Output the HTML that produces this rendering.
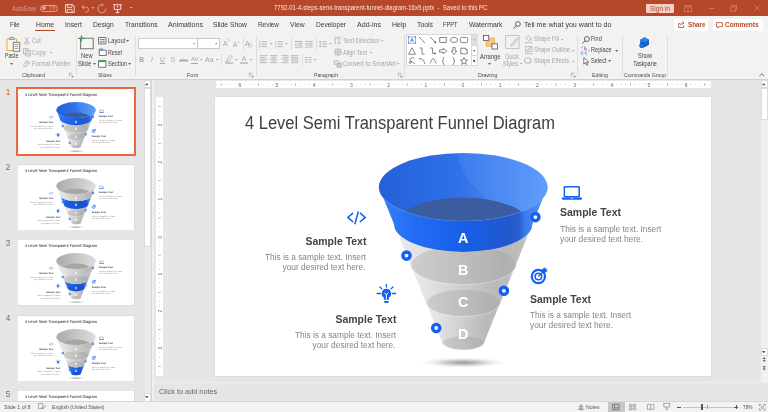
<!DOCTYPE html>
<html><head><meta charset="utf-8"><title>PowerPoint</title><style>
html,body{margin:0;padding:0;}
body{width:768px;height:412px;overflow:hidden;position:relative;background:#e6e6e6;font-family:"Liberation Sans",sans-serif;}
#root{position:absolute;left:0;top:0;width:768px;height:412px;overflow:hidden;will-change:transform;}
.a{position:absolute;box-sizing:border-box;}
.t{position:absolute;white-space:nowrap;font-family:"Liberation Sans",sans-serif;}
.th .t{text-rendering:geometricPrecision;}
svg{position:absolute;overflow:visible;}
</style></head><body>
<div id="root">
<div class="a" style="left:0px;top:0px;width:768px;height:16.3px;background:#b7472a;"></div>
<div class="a" style="left:0px;top:16.3px;width:768px;height:62.7px;background:#f3f2f1;"></div>
<div class="a" style="left:0px;top:79px;width:768px;height:1px;background:#d2d0ce;"></div>
<div class="a" style="left:0px;top:80px;width:768px;height:322px;background:#e6e6e6;"></div>
<div class="t" id="t0" style="top:1.50px;height:13px;line-height:13px;font-size:6.4px;color:rgba(255,255,255,.45);left:11.5px;transform:scaleX(0.8839);transform-origin:0 50%;">AutoSave</div>
<div class="a" style="left:39.5px;top:4.5px;width:18.5px;height:7.5px;border:1px solid rgba(255,255,255,.5);border-radius:4px;"></div>
<div class="a" style="left:42px;top:6.4px;width:3.6px;height:3.6px;border-radius:2px;background:rgba(255,255,255,.5);"></div>
<div class="t" id="t1" style="top:3.20px;height:10px;line-height:10px;font-size:5.2px;color:rgba(255,255,255,.45);left:48.6px;transform:scaleX(0.9519);transform-origin:0 50%;">Off</div>
<svg style="left:65px;top:4px" width="10" height="9" viewBox="0 0 10 9"><path d="M0.6 0.6h7l1.6 1.4v6.4H0.6z" fill="none" stroke="#fff" stroke-width=".9" opacity=".88"/><path d="M2.4 0.8v2.6h4.6V0.8M2.4 8.2V5.4h4.6v2.8" fill="none" stroke="#fff" stroke-width=".8" opacity=".85"/></svg>
<svg style="left:80.5px;top:4px" width="9" height="9" viewBox="0 0 9 9"><path d="M3.2 0.8L0.9 3.2l2.6 2.2M1 3.2h4.2a2.3 2.4 0 0 1 0 4.9H4.2" fill="none" stroke="rgba(255,255,255,.42)" stroke-width="1"/></svg>
<svg style="left:90.5px;top:7px" width="4" height="3" viewBox="0 0 4 3"><path d="M0 0h3.6L1.8 2.2z" fill="rgba(255,255,255,.4)"/></svg>
<svg style="left:97.3px;top:3.1px" width="9.9" height="10.4" viewBox="0 0 9 9.5"><path d="M5.2 1.6A3.6 3.7 0 1 0 8 5" fill="none" stroke="rgba(255,255,255,.42)" stroke-width="1"/><path d="M4.4 0.4l1.6 1.4-1.5 1.5" fill="none" stroke="rgba(255,255,255,.42)" stroke-width=".9"/></svg>
<svg style="left:113px;top:3.6px" width="9" height="9.5" viewBox="0 0 9 9.5"><path d="M0.3 0.7h8.4M1.2 0.8v4.6h6.6V0.8M4.5 5.4v3M2.6 8.6h3.8" fill="none" stroke="#fff" stroke-width=".9" opacity=".9"/><circle cx="4.5" cy="2.6" r=".8" fill="#fff" opacity=".9"/></svg>
<svg style="left:129.6px;top:7.4px" width="3" height="2.4" viewBox="0 0 3 2.4"><path d="M0.2 0h2.2L1.3 1.6z" fill="rgba(255,255,255,.75)"/></svg>
<div class="t" id="t2" style="top:1.10px;height:13px;line-height:13px;font-size:6.4px;color:rgba(255,255,255,.88);left:273.8px;transform:scaleX(0.9358);transform-origin:0 50%;">7792-01-4-steps-semi-transparent-funnel-diagram-16x9.pptx&nbsp; -&nbsp; Saved to this PC</div>
<div class="a" style="left:646px;top:4px;width:27.5px;height:8.6px;background:#f6cfc4;"></div>
<div class="t" id="t3" style="top:1.90px;height:13px;line-height:13px;font-size:6.6px;color:#b7472a;left:509.80px;width:300px;text-align:center;transform:scaleX(0.9915);transform-origin:50% 50%;">Sign in</div>
<svg style="left:684px;top:4.5px" width="8" height="7" viewBox="0 0 8 7"><path d="M0.5 0.5h7v6h-7zM0.5 2h7M4 2v4.5" fill="none" stroke="rgba(255,255,255,.27)" stroke-width=".9"/></svg>
<div class="a" style="left:708.5px;top:8px;width:5.5px;height:1px;background:rgba(255,255,255,.27);"></div>
<svg style="left:730px;top:4.5px" width="7" height="7" viewBox="0 0 7 7"><path d="M0.5 1.8h4.6v4.6H0.5zM1.9 1.8V0.5h4.6v4.6H5.2" fill="none" stroke="rgba(255,255,255,.27)" stroke-width=".9"/></svg>
<svg style="left:753.5px;top:5px" width="6" height="6" viewBox="0 0 6 6"><path d="M0.3 0.3l5.4 5.4M5.7 0.3L0.3 5.7" fill="none" stroke="rgba(255,255,255,.27)" stroke-width=".9"/></svg>
<div class="t" id="t4" style="top:17.10px;height:15px;line-height:15px;font-size:7.3px;color:#3b3a39;left:9.7px;transform:scaleX(0.8159);transform-origin:0 50%;">File</div>
<div class="t" id="t5" style="top:17.10px;height:15px;line-height:15px;font-size:7.3px;color:#3b3a39;left:35.5px;transform:scaleX(0.9297);transform-origin:0 50%;">Home</div>
<div class="t" id="t6" style="top:17.10px;height:15px;line-height:15px;font-size:7.3px;color:#3b3a39;left:64.8px;transform:scaleX(0.9260);transform-origin:0 50%;">Insert</div>
<div class="t" id="t7" style="top:17.10px;height:15px;line-height:15px;font-size:7.3px;color:#3b3a39;left:92.6px;transform:scaleX(0.9155);transform-origin:0 50%;">Design</div>
<div class="t" id="t8" style="top:17.10px;height:15px;line-height:15px;font-size:7.3px;color:#3b3a39;left:124.5px;transform:scaleX(0.9175);transform-origin:0 50%;">Transitions</div>
<div class="t" id="t9" style="top:17.10px;height:15px;line-height:15px;font-size:7.3px;color:#3b3a39;left:167.5px;transform:scaleX(0.9693);transform-origin:0 50%;">Animations</div>
<div class="t" id="t10" style="top:17.10px;height:15px;line-height:15px;font-size:7.3px;color:#3b3a39;left:212.5px;transform:scaleX(0.9311);transform-origin:0 50%;">Slide Show</div>
<div class="t" id="t11" style="top:17.10px;height:15px;line-height:15px;font-size:7.3px;color:#3b3a39;left:257.5px;transform:scaleX(0.8773);transform-origin:0 50%;">Review</div>
<div class="t" id="t12" style="top:17.10px;height:15px;line-height:15px;font-size:7.3px;color:#3b3a39;left:290px;transform:scaleX(0.9243);transform-origin:0 50%;">View</div>
<div class="t" id="t13" style="top:17.10px;height:15px;line-height:15px;font-size:7.3px;color:#3b3a39;left:316px;transform:scaleX(0.9018);transform-origin:0 50%;">Developer</div>
<div class="t" id="t14" style="top:17.10px;height:15px;line-height:15px;font-size:7.3px;color:#3b3a39;left:357px;transform:scaleX(0.9697);transform-origin:0 50%;">Add-ins</div>
<div class="t" id="t15" style="top:17.10px;height:15px;line-height:15px;font-size:7.3px;color:#3b3a39;left:391.5px;transform:scaleX(0.9657);transform-origin:0 50%;">Help</div>
<div class="t" id="t16" style="top:17.10px;height:15px;line-height:15px;font-size:7.3px;color:#3b3a39;left:416.5px;transform:scaleX(0.9386);transform-origin:0 50%;">Tools</div>
<div class="t" id="t17" style="top:17.10px;height:15px;line-height:15px;font-size:7.3px;color:#3b3a39;left:443px;transform:scaleX(0.7772);transform-origin:0 50%;">FPPT</div>
<div class="t" id="t18" style="top:17.10px;height:15px;line-height:15px;font-size:7.3px;color:#3b3a39;left:469px;transform:scaleX(0.9462);transform-origin:0 50%;">Watermark</div>
<div class="a" style="left:35px;top:30px;width:19.5px;height:1.4px;background:#b7472a;"></div>
<svg style="left:512.5px;top:20.5px" width="8" height="8" viewBox="0 0 8 8"><circle cx="4.9" cy="3" r="2.4" fill="none" stroke="#444" stroke-width=".8"/><path d="M3.2 4.7L0.5 7.5" stroke="#444" stroke-width=".9"/></svg>
<div class="t" id="t19" style="top:17.10px;height:15px;line-height:15px;font-size:7.3px;color:#3b3a39;left:524px;transform:scaleX(0.9717);transform-origin:0 50%;">Tell me what you want to do</div>
<div class="a" style="left:674px;top:19px;width:34px;height:11.5px;background:#fff;"></div>
<svg style="left:677.5px;top:21.2px" width="7" height="7" viewBox="0 0 7 7"><path d="M2.5 2.6H0.6v3.9h5V4.4M2.6 4.6c.2-1.6 1.2-2.6 3-2.6M4.4 0.5l1.6 1.5-1.6 1.5" fill="none" stroke="#b7472a" stroke-width=".8"/></svg>
<div class="t" id="t20" style="top:17.60px;height:14px;line-height:14px;font-size:6.8px;color:#b7472a;font-weight:700;left:687.5px;transform:scaleX(0.9264);transform-origin:0 50%;">Share</div>
<div class="a" style="left:712.5px;top:19px;width:50px;height:11.5px;background:#fff;"></div>
<svg style="left:716px;top:21.6px" width="7" height="7" viewBox="0 0 7 7"><path d="M0.5 0.6h6v4h-3.4l-1.3 1.5v-1.5H0.5z" fill="none" stroke="#b7472a" stroke-width=".8"/></svg>
<div class="t" id="t21" style="top:17.60px;height:14px;line-height:14px;font-size:6.8px;color:#b7472a;font-weight:700;left:724.5px;transform:scaleX(0.9566);transform-origin:0 50%;">Comments</div>
<svg style="left:5.5px;top:35.5px" width="15" height="16" viewBox="0 0 15 16">
<path d="M1 3h9.5v11.5H1z" fill="#fdf6ec" stroke="#e9a552" stroke-width="1"/>
<path d="M3.6 3.4V1.8h1.3a.9.9 0 0 1 1.8 0H8v1.6z" fill="#f3f2f1" stroke="#777" stroke-width=".8"/>
<path d="M7.3 6.3h6.4v9H7.3z" fill="#fff" stroke="#6a6a6a" stroke-width=".9"/>
<path d="M8.6 8.5h3.8M8.6 10.5h3.8M8.6 12.6h3.8" stroke="#6a6a6a" stroke-width=".7"/></svg>
<div class="t" id="t22" style="top:49.30px;height:13px;line-height:13px;font-size:6.5px;color:#444;left:4.7px;transform:scaleX(0.8000);transform-origin:0 50%;">Paste</div>
<svg style="left:9.90px;top:62.90px" width="3.20" height="2.00" viewBox="0 0 3.2 2"><path d="M0 0h3.2L1.6 1.9z" fill="#666"/></svg>
<svg style="left:24.3px;top:36.5px" width="5.5" height="7.5" viewBox="0 0 5.5 7.5"><path d="M1 0.3l3 5M4.5 0.3l-3 5" stroke="#a6a6a6" stroke-width=".7" fill="none"/><circle cx="1.2" cy="6.2" r=".9" fill="none" stroke="#a6a6a6" stroke-width=".6"/><circle cx="4.3" cy="6.2" r=".9" fill="none" stroke="#a6a6a6" stroke-width=".6"/></svg>
<div class="t" id="t23" style="top:33.90px;height:13px;line-height:13px;font-size:6.5px;color:#a6a6a6;left:31.8px;transform:scaleX(0.8593);transform-origin:0 50%;">Cut</div>
<svg style="left:22.8px;top:47.6px" width="8" height="8.5" viewBox="0 0 8 8.5"><path d="M0.4 0.4h4.4v5.6H0.4z" fill="#ececec" stroke="#a6a6a6" stroke-width=".7"/><path d="M2.8 2.4h4.6V8H2.8z" fill="#f3f2f1" stroke="#a6a6a6" stroke-width=".7"/><path d="M3.8 4.2h2.6M3.8 5.4h2.6M3.8 6.6h2.6" stroke="#a6a6a6" stroke-width=".5"/></svg>
<div class="t" id="t24" style="top:45.70px;height:13px;line-height:13px;font-size:6.5px;color:#a6a6a6;left:31.8px;transform:scaleX(0.9021);transform-origin:0 50%;">Copy</div>
<svg style="left:49.52px;top:51.68px" width="2.56" height="1.60" viewBox="0 0 3.2 2"><path d="M0 0h3.2L1.6 1.9z" fill="#a6a6a6"/></svg>
<svg style="left:23.3px;top:59.6px" width="7.5" height="7.5" viewBox="0 0 7.5 7.5"><path d="M3.2 0.6l3.4 2-1 1.6-3.4-2zM2.6 2.6L0.8 4.4l2.4 2.6 1.4-2.8M1.4 5.4l-.8 1.4" fill="none" stroke="#a6a6a6" stroke-width=".7"/></svg>
<div class="t" id="t25" style="top:57.00px;height:13px;line-height:13px;font-size:6.5px;color:#a6a6a6;left:31.8px;transform:scaleX(0.8953);transform-origin:0 50%;">Format Painter</div>
<div class="t" id="t26" style="top:69.00px;height:12px;line-height:12px;font-size:6.0px;color:#4c4b4a;left:22px;transform:scaleX(0.8954);transform-origin:0 50%;">Clipboard</div>
<svg style="left:68.8px;top:72.8px" width="4.6" height="4.6" viewBox="0 0 4.6 4.6"><path d="M0.3 3.4V0.3h3.1M2 2l2 2M4.2 2.4v1.8H2.4" fill="none" stroke="#8a8886" stroke-width=".6"/></svg>
<div class="a" style="left:75.5px;top:35px;width:1px;height:41px;background:#e0dedc;"></div>
<svg style="left:78px;top:34.5px" width="16.5" height="15" viewBox="0 0 16.5 15">
<path d="M2.6 3.3h12.6v10.4H2.6z" fill="#f6f6f6" stroke="#777" stroke-width="1.1"/>
<path d="M3.4 0.2v6.4M0.2 3.4h6.4" stroke="#2e9f4b" stroke-width="1.1"/></svg>
<div class="t" id="t27" style="top:49.30px;height:13px;line-height:13px;font-size:6.5px;color:#444;left:81px;transform:scaleX(0.8912);transform-origin:0 50%;">New</div>
<div class="t" id="t28" style="top:57.20px;height:13px;line-height:13px;font-size:6.5px;color:#444;left:77.9px;transform:scaleX(0.9123);transform-origin:0 50%;">Slide</div>
<svg style="left:92.60px;top:63.10px" width="3.20" height="2.00" viewBox="0 0 3.2 2"><path d="M0 0h3.2L1.6 1.9z" fill="#666"/></svg>
<svg style="left:98px;top:36.6px" width="8.4" height="7.4" viewBox="0 0 8.4 7.4"><path d="M0.5 0.5h7.4v6.4H0.5z" fill="#fff" stroke="#666" stroke-width=".9"/><path d="M1.8 1.9h4.8v1.3H1.8zM1.8 4h2v1.8h-2zM4.6 4h2v1.8h-2z" fill="#888"/></svg>
<div class="t" id="t29" style="top:33.90px;height:13px;line-height:13px;font-size:6.5px;color:#444;left:107.5px;transform:scaleX(0.8858);transform-origin:0 50%;">Layout</div>
<svg style="left:125.60px;top:39.90px" width="3.20" height="2.00" viewBox="0 0 3.2 2"><path d="M0 0h3.2L1.6 1.9z" fill="#666"/></svg>
<svg style="left:97.6px;top:47.8px" width="8.8" height="8" viewBox="0 0 8.8 8"><path d="M1.3 2.1h7v5.4h-7z" fill="#fff" stroke="#666" stroke-width=".9"/><path d="M0.4 2.2A2.2 2.2 0 0 1 4 1.6M4.2 0.2v1.7H2.6" fill="none" stroke="#2b7cd3" stroke-width=".8"/></svg>
<div class="t" id="t30" style="top:45.70px;height:13px;line-height:13px;font-size:6.5px;color:#444;left:107.5px;transform:scaleX(0.8243);transform-origin:0 50%;">Reset</div>
<svg style="left:98px;top:59.5px" width="8.4" height="7.8" viewBox="0 0 8.4 7.8"><path d="M0.5 1.6h7.4v5.7H0.5z" fill="#fff" stroke="#666" stroke-width=".9"/><path d="M0 0.1h8.4v1.5H0z" fill="#3a9d4f"/></svg>
<div class="t" id="t31" style="top:57.00px;height:13px;line-height:13px;font-size:6.5px;color:#444;left:107.5px;transform:scaleX(0.8761);transform-origin:0 50%;">Section</div>
<svg style="left:128.00px;top:63.10px" width="3.20" height="2.00" viewBox="0 0 3.2 2"><path d="M0 0h3.2L1.6 1.9z" fill="#666"/></svg>
<div class="t" id="t32" style="top:69.00px;height:12px;line-height:12px;font-size:6.0px;color:#4c4b4a;left:98px;transform:scaleX(0.8382);transform-origin:0 50%;">Slides</div>
<div class="a" style="left:135px;top:35px;width:1px;height:41px;background:#e0dedc;"></div>
<div class="a" style="left:137.5px;top:38px;width:60px;height:11px;background:#fff;border:1px solid #d2d0ce;"></div>
<svg style="left:192.72px;top:43.08px" width="2.56" height="1.60" viewBox="0 0 3.2 2"><path d="M0 0h3.2L1.6 1.9z" fill="#999"/></svg>
<div class="a" style="left:197px;top:38px;width:22.5px;height:11px;background:#fff;border:1px solid #c8c6c4;"></div>
<svg style="left:214.72px;top:43.08px" width="2.56" height="1.60" viewBox="0 0 3.2 2"><path d="M0 0h3.2L1.6 1.9z" fill="#888"/></svg>
<div class="t" id="t33" style="top:36.80px;height:14px;line-height:14px;font-size:7.2px;color:#a6a6a6;left:222.5px;transform:scaleX(0.9590);transform-origin:0 50%;">A</div>
<div class="t" id="t34" style="top:36.90px;height:9px;line-height:9px;font-size:4.5px;color:#a6a6a6;left:227.6px;">^</div>
<div class="t" id="t35" style="top:37.50px;height:13px;line-height:13px;font-size:6.4px;color:#a6a6a6;left:233px;transform:scaleX(0.9846);transform-origin:0 50%;">A</div>
<div class="t" id="t36" style="top:38.50px;height:7px;line-height:7px;font-size:3.6px;color:#a6a6a6;left:237.6px;">v</div>
<div class="a" style="left:242.5px;top:38px;width:1px;height:12px;background:#e0dedc;"></div>
<div class="t" id="t37" style="top:36.10px;height:15px;line-height:15px;font-size:7.4px;color:#a6a6a6;left:245px;transform:scaleX(0.9722);transform-origin:0 50%;">A</div>
<svg style="left:248.4px;top:43.2px" width="4.6" height="4.4" viewBox="0 0 4.6 4.4"><path d="M1.8 0.4l2.4 1.9-1.8 1.8H1.3L0.4 3.2z" fill="#f3f2f1" stroke="#a6a6a6" stroke-width=".6"/></svg>
<div class="t" id="t38" style="top:53.10px;height:13px;line-height:13px;font-size:6.6px;color:#a6a6a6;font-weight:700;left:-8.30px;width:300px;text-align:center;">B</div>
<div class="t" id="t39" style="top:52.60px;height:14px;line-height:14px;font-size:6.8px;color:#a6a6a6;left:2.00px;width:300px;text-align:center;font-style:italic;font-family:"Liberation Serif",serif;">I</div>
<div class="t" id="t40" style="top:53.10px;height:13px;line-height:13px;font-size:6.6px;color:#a6a6a6;left:12.50px;width:300px;text-align:center;text-decoration:underline;">U</div>
<div class="t" id="t41" style="top:53.10px;height:13px;line-height:13px;font-size:6.6px;color:#a6a6a6;left:23.00px;width:300px;text-align:center;">S</div>
<div class="t" id="t42" style="top:54.60px;height:10px;line-height:10px;font-size:5.2px;color:#a6a6a6;left:33.70px;width:300px;text-align:center;text-decoration:line-through;">abc</div>
<div class="t" id="t43" style="top:53.50px;height:11px;line-height:11px;font-size:5.6px;color:#a6a6a6;left:190.6px;transform:scaleX(1.0785);transform-origin:0 50%;">AV</div>
<div class="a" style="left:190.6px;top:62.6px;width:7.6px;height:0.7px;background:#a6a6a6;"></div>
<svg style="left:199.52px;top:59.28px" width="2.56" height="1.60" viewBox="0 0 3.2 2"><path d="M0 0h3.2L1.6 1.9z" fill="#a6a6a6"/></svg>
<div class="t" id="t44" style="top:53.10px;height:13px;line-height:13px;font-size:6.6px;color:#a6a6a6;left:205.2px;transform:scaleX(1.0646);transform-origin:0 50%;">Aa</div>
<svg style="left:215.72px;top:59.28px" width="2.56" height="1.60" viewBox="0 0 3.2 2"><path d="M0 0h3.2L1.6 1.9z" fill="#a6a6a6"/></svg>
<div class="a" style="left:220.5px;top:54px;width:1px;height:12px;background:#e0dedc;"></div>
<svg style="left:225px;top:54.6px" width="8" height="7" viewBox="0 0 8 7"><path d="M5.6 0.4l1.9 1.7-3.4 3.5-2 .3.2-2zM0.3 6.6h2.2" fill="none" stroke="#a6a6a6" stroke-width=".7"/></svg>
<div class="a" style="left:224.8px;top:62.4px;width:8px;height:1.6px;background:#c8c8c8;"></div>
<svg style="left:234.52px;top:59.28px" width="2.56" height="1.60" viewBox="0 0 3.2 2"><path d="M0 0h3.2L1.6 1.9z" fill="#a6a6a6"/></svg>
<div class="t" id="t45" style="top:51.60px;height:14px;line-height:14px;font-size:6.8px;color:#a6a6a6;left:94.00px;width:300px;text-align:center;">A</div>
<div class="a" style="left:240.4px;top:62.4px;width:7.4px;height:1.6px;background:#c8c8c8;"></div>
<svg style="left:250.22px;top:59.28px" width="2.56" height="1.60" viewBox="0 0 3.2 2"><path d="M0 0h3.2L1.6 1.9z" fill="#a6a6a6"/></svg>
<div class="t" id="t46" style="top:69.00px;height:12px;line-height:12px;font-size:6.0px;color:#4c4b4a;left:186.5px;transform:scaleX(0.9155);transform-origin:0 50%;">Font</div>
<svg style="left:249.3px;top:72.8px" width="4.6" height="4.6" viewBox="0 0 4.6 4.6"><path d="M0.3 3.4V0.3h3.1M2 2l2 2M4.2 2.4v1.8H2.4" fill="none" stroke="#8a8886" stroke-width=".6"/></svg>
<div class="a" style="left:255.7px;top:35px;width:1px;height:41px;background:#e0dedc;"></div>
<svg style="left:259px;top:40.5px" width="8" height="6.5" viewBox="0 0 8 6.5"><path d="M2.6 0.8h5.4M2.6 3.2h5.4M2.6 5.6h5.4" fill="none" stroke="#a6a6a6" stroke-width=".75"/><rect x="0.2" y="0.2" width="1.2" height="1.2" fill="#a6a6a6"/><rect x="0.2" y="2.6" width="1.2" height="1.2" fill="#a6a6a6"/><rect x="0.2" y="5.0" width="1.2" height="1.2" fill="#a6a6a6"/></svg>
<svg style="left:269.52px;top:43.28px" width="2.56" height="1.60" viewBox="0 0 3.2 2"><path d="M0 0h3.2L1.6 1.9z" fill="#a6a6a6"/></svg>
<svg style="left:274.5px;top:40.5px" width="8" height="6.5" viewBox="0 0 8 6.5"><path d="M2.6 0.8h5.4M2.6 3.2h5.4M2.6 5.6h5.4" fill="none" stroke="#a6a6a6" stroke-width=".75"/><rect x="0.4" y="0.1" width=".7" height="1.5" fill="#a6a6a6"/><rect x="0.4" y="2.5" width=".7" height="1.5" fill="#a6a6a6"/><rect x="0.4" y="4.9" width=".7" height="1.5" fill="#a6a6a6"/></svg>
<svg style="left:285.32px;top:43.28px" width="2.56" height="1.60" viewBox="0 0 3.2 2"><path d="M0 0h3.2L1.6 1.9z" fill="#a6a6a6"/></svg>
<div class="a" style="left:290.6px;top:38px;width:1px;height:12px;background:#e0dedc;"></div>
<svg style="left:294.5px;top:40.5px" width="8" height="6.5" viewBox="0 0 8 6.5"><path d="M0 0.5h7.6M3.4 2.4h4.2M3.4 4.2h4.2M0 6.1h7.6M2.4 3.3H0.3M1.3 2.2L0.2 3.3l1.1 1.1" fill="none" stroke="#a6a6a6" stroke-width=".75"/></svg>
<svg style="left:305px;top:40.5px" width="8" height="6.5" viewBox="0 0 8 6.5"><path d="M0 0.5h7.6M3.4 2.4h4.2M3.4 4.2h4.2M0 6.1h7.6M0.2 3.3h2.1M1.3 2.2l1.1 1.1-1.1 1.1" fill="none" stroke="#a6a6a6" stroke-width=".75"/></svg>
<div class="a" style="left:315.7px;top:38px;width:1px;height:12px;background:#e0dedc;"></div>
<svg style="left:319px;top:40.5px" width="8" height="6.5" viewBox="0 0 8 6.5"><path d="M3.2 0.8h4.8M3.2 3.2h4.8M3.2 5.6h4.8M1.2 0.4v5.8M0.2 1.4l1-1 1 1M0.2 5.2l1 1 1-1" fill="none" stroke="#a6a6a6" stroke-width=".75"/></svg>
<svg style="left:328.92px;top:43.28px" width="2.56" height="1.60" viewBox="0 0 3.2 2"><path d="M0 0h3.2L1.6 1.9z" fill="#a6a6a6"/></svg>
<svg style="left:259.5px;top:55.0px" width="7.5" height="8.4" viewBox="0 0 7.5 8.4"><rect x="0" y="0.0" width="7.5" height="1.15" fill="#c2c2c2"/><rect x="0" y="1.75" width="5" height="1.15" fill="#c2c2c2"/><rect x="0" y="3.5" width="7.5" height="1.15" fill="#c2c2c2"/><rect x="0" y="5.25" width="5" height="1.15" fill="#c2c2c2"/><rect x="0" y="7.0" width="7.5" height="1.15" fill="#c2c2c2"/></svg>
<svg style="left:270.2px;top:55.0px" width="7.5" height="8.4" viewBox="0 0 7.5 8.4"><rect x="0.0" y="0.0" width="7.5" height="1.15" fill="#c2c2c2"/><rect x="1.5" y="1.75" width="4.5" height="1.15" fill="#c2c2c2"/><rect x="0.0" y="3.5" width="7.5" height="1.15" fill="#c2c2c2"/><rect x="1.5" y="5.25" width="4.5" height="1.15" fill="#c2c2c2"/><rect x="0.0" y="7.0" width="7.5" height="1.15" fill="#c2c2c2"/></svg>
<svg style="left:280.7px;top:55.0px" width="7.5" height="8.4" viewBox="0 0 7.5 8.4"><rect x="0.0" y="0.0" width="7.5" height="1.15" fill="#c2c2c2"/><rect x="2.5" y="1.75" width="5" height="1.15" fill="#c2c2c2"/><rect x="0.0" y="3.5" width="7.5" height="1.15" fill="#c2c2c2"/><rect x="2.5" y="5.25" width="5" height="1.15" fill="#c2c2c2"/><rect x="0.0" y="7.0" width="7.5" height="1.15" fill="#c2c2c2"/></svg>
<svg style="left:291px;top:55.0px" width="7.5" height="8.4" viewBox="0 0 7.5 8.4"><rect x="0" y="0.0" width="7.5" height="1.15" fill="#c2c2c2"/><rect x="0" y="1.75" width="7.5" height="1.15" fill="#c2c2c2"/><rect x="0" y="3.5" width="7.5" height="1.15" fill="#c2c2c2"/><rect x="0" y="5.25" width="7.5" height="1.15" fill="#c2c2c2"/><rect x="0" y="7.0" width="7.5" height="1.15" fill="#c2c2c2"/></svg>
<div class="a" style="left:301.5px;top:54px;width:1px;height:12px;background:#e0dedc;"></div>
<svg style="left:305px;top:56.800000000000004px" width="6.6" height="5.6" viewBox="0 0 6.6 5.6"><path d="M0 0.5h2.8M0 2.8h2.8M0 5.1h2.8M3.8 0.5h2.8M3.8 2.8h2.8M3.8 5.1h2.8" stroke="#a6a6a6" stroke-width=".8"/></svg>
<svg style="left:313.92px;top:59.28px" width="2.56" height="1.60" viewBox="0 0 3.2 2"><path d="M0 0h3.2L1.6 1.9z" fill="#a6a6a6"/></svg>
<svg style="left:334.5px;top:35.8px" width="7" height="8.5" viewBox="0 0 7 8.5"><path d="M0.3 0.6v7.4M4 0.5v7.5M2.7 6.6l1.3 1.5 1.3-1.5M5.6 0.6h1.2M5.6 2.6h1.2" fill="none" stroke="#a6a6a6" stroke-width=".7"/><path d="M1.4 3.2l.9-2.4.9 2.4" fill="none" stroke="#a6a6a6" stroke-width=".55"/></svg>
<div class="t" id="t47" style="top:33.70px;height:13px;line-height:13px;font-size:6.5px;color:#a6a6a6;left:343px;transform:scaleX(0.9270);transform-origin:0 50%;">Text Direction</div>
<svg style="left:381.32px;top:39.88px" width="2.56" height="1.60" viewBox="0 0 3.2 2"><path d="M0 0h3.2L1.6 1.9z" fill="#a6a6a6"/></svg>
<svg style="left:334px;top:48px" width="8" height="8" viewBox="0 0 8 8"><path d="M1.2 1.2h5.6v5.6H1.2z" fill="none" stroke="#a6a6a6" stroke-width=".7"/><path d="M0 4h8M4 0v8" stroke="#a6a6a6" stroke-width=".6"/><path d="M2.6 3h2.8M2.6 5h2.8" stroke="#a6a6a6" stroke-width=".6"/></svg>
<div class="t" id="t48" style="top:45.70px;height:13px;line-height:13px;font-size:6.5px;color:#a6a6a6;left:343px;transform:scaleX(0.8548);transform-origin:0 50%;">Align Text</div>
<svg style="left:370.32px;top:51.78px" width="2.56" height="1.60" viewBox="0 0 3.2 2"><path d="M0 0h3.2L1.6 1.9z" fill="#a6a6a6"/></svg>
<svg style="left:334px;top:59.6px" width="8" height="7.6" viewBox="0 0 8 7.6"><path d="M0.4 0.4h3.6l1.4 1.5v2.5H0.4z" fill="#e4e4e4" stroke="#a6a6a6" stroke-width=".6"/><path d="M3 3.4h4.6v3.8H3z" fill="#d0d0d0" stroke="#a6a6a6" stroke-width=".6"/></svg>
<div class="t" id="t49" style="top:57.00px;height:13px;line-height:13px;font-size:6.5px;color:#a6a6a6;left:343px;transform:scaleX(0.9193);transform-origin:0 50%;">Convert to SmartArt</div>
<svg style="left:397.32px;top:63.18px" width="2.56" height="1.60" viewBox="0 0 3.2 2"><path d="M0 0h3.2L1.6 1.9z" fill="#a6a6a6"/></svg>
<div class="t" id="t50" style="top:69.00px;height:12px;line-height:12px;font-size:6.0px;color:#4c4b4a;left:314px;transform:scaleX(0.8562);transform-origin:0 50%;">Paragraph</div>
<svg style="left:397.8px;top:72.8px" width="4.6" height="4.6" viewBox="0 0 4.6 4.6"><path d="M0.3 3.4V0.3h3.1M2 2l2 2M4.2 2.4v1.8H2.4" fill="none" stroke="#8a8886" stroke-width=".6"/></svg>
<div class="a" style="left:404px;top:35px;width:1px;height:41px;background:#e0dedc;"></div>
<div class="a" style="left:406.3px;top:34.3px;width:71.4px;height:31.6px;background:#fff;border:1px solid #dad8d6;"></div>
<div class="a" style="left:470.5px;top:34.5px;width:7px;height:10.3px;background:#e1dfdd;"></div>
<div class="a" style="left:470.5px;top:34.8px;width:0.7px;height:30.6px;background:#dad8d6;"></div>
<div class="a" style="left:470.5px;top:44.8px;width:6.6px;height:0.7px;background:#dad8d6;"></div>
<div class="a" style="left:470.5px;top:55.2px;width:6.6px;height:0.7px;background:#dad8d6;"></div>
<svg style="left:472.72px;top:39.28px" width="2.56" height="1.60" viewBox="0 0 3.2 2"><path d="M0 0h3.2L1.6 1.9z" fill="#b5b3b1"/></svg>
<svg style="left:472.72px;top:49.68px" width="2.56" height="1.60" viewBox="0 0 3.2 2"><path d="M0 0h3.2L1.6 1.9z" fill="#555"/></svg>
<svg style="left:472.72px;top:60.88px" width="2.56" height="1.60" viewBox="0 0 3.2 2"><path d="M0 0h3.2L1.6 1.9z" fill="#555"/></svg>
<div class="a" style="left:472.6px;top:59.6px;width:2.8px;height:0.6px;background:#555;"></div>
<svg style="left:408.0px;top:35.6px" width="8" height="8" viewBox="0 0 8 8"><rect x="0.6" y="0.9" width="6.8" height="6.2" fill="#f4f8fd" stroke="#6aa2de" stroke-width=".7"/><path d="M2.6 5.6L4 2.4l1.4 3.2M3.1 4.6h1.8" fill="none" stroke="#2b5797" stroke-width=".6"/><rect x="0" y="0.3" width="1.2" height="1.2" fill="#2b7cd3"/><rect x="6.8" y="0.3" width="1.2" height="1.2" fill="#2b7cd3"/><rect x="0" y="6.5" width="1.2" height="1.2" fill="#2b7cd3"/><rect x="6.8" y="6.5" width="1.2" height="1.2" fill="#2b7cd3"/></svg>
<svg style="left:418.3px;top:35.6px" width="8" height="8" viewBox="0 0 8 8"><path d="M1 1l6 6" fill="none" stroke="#555" stroke-width=".7"/></svg>
<svg style="left:428.7px;top:35.6px" width="8" height="8" viewBox="0 0 8 8"><path d="M0.8 0.8l6 6" fill="none" stroke="#555" stroke-width=".7"/><path d="M7.4 7.4L5 6.6l1.6-1.6z" fill="#555"/></svg>
<svg style="left:439.0px;top:35.6px" width="8" height="8" viewBox="0 0 8 8"><rect x="0.8" y="1.4" width="6.4" height="5.2" fill="none" stroke="#555" stroke-width=".7"/></svg>
<svg style="left:449.6px;top:35.6px" width="8" height="8" viewBox="0 0 8 8"><ellipse cx="4" cy="4" rx="3.6" ry="2.6" fill="none" stroke="#555" stroke-width=".7"/></svg>
<svg style="left:460.0px;top:35.6px" width="8" height="8" viewBox="0 0 8 8"><rect x="0.4" y="1.4" width="7.2" height="5.2" rx="1.2" fill="none" stroke="#555" stroke-width=".7"/></svg>
<svg style="left:408.0px;top:46.6px" width="8" height="8" viewBox="0 0 8 8"><path d="M4 0.8L7.4 7.2H0.6z" fill="none" stroke="#555" stroke-width=".7"/></svg>
<svg style="left:418.3px;top:46.6px" width="8" height="8" viewBox="0 0 8 8"><path d="M1.4 1h2.6v6h2.6" fill="none" stroke="#555" stroke-width=".7"/></svg>
<svg style="left:428.7px;top:46.6px" width="8" height="8" viewBox="0 0 8 8"><path d="M1 1h2.6v5.4h2.4" fill="none" stroke="#555" stroke-width=".7"/><path d="M7.4 6.4L5.6 5.3v2.2z" fill="#555"/></svg>
<svg style="left:439.0px;top:46.6px" width="8" height="8" viewBox="0 0 8 8"><path d="M0.6 2.8h3.6V1.2L7.6 4 4.2 6.8V5.2H0.6z" fill="none" stroke="#555" stroke-width=".7"/></svg>
<svg style="left:449.6px;top:46.6px" width="8" height="8" viewBox="0 0 8 8"><path d="M2.8 0.6h2.4v3.6h1.6L4 7.6 1.2 4.2h1.6z" fill="none" stroke="#555" stroke-width=".7"/></svg>
<svg style="left:460.0px;top:46.6px" width="8" height="8" viewBox="0 0 8 8"><path d="M0.8 1.2h4.6l1.8 1.8v3.8H0.8z" fill="none" stroke="#555" stroke-width=".7"/><path d="M7.2 3A1.8 1.8 0 0 1 5.4 1.2" fill="none" stroke="#555" stroke-width=".7"/></svg>
<svg style="left:408.0px;top:56.8px" width="8" height="8" viewBox="0 0 8 8"><path d="M6.4 1C3 0.2 0.4 2.6 2.6 3.6 5.4 4.8 1.6 7.8 1 5.4 0.6 3.8 5 4.6 7 7" fill="none" stroke="#555" stroke-width=".7"/></svg>
<svg style="left:418.3px;top:56.8px" width="8" height="8" viewBox="0 0 8 8"><path d="M0.8 1.4c3.4 0 5.2 2 6.2 5.6" fill="none" stroke="#555" stroke-width=".7"/></svg>
<svg style="left:428.7px;top:56.8px" width="8" height="8" viewBox="0 0 8 8"><path d="M0.6 6.4C2 6 2.4 1.6 4 1.6s2 3 3.4 5" fill="none" stroke="#555" stroke-width=".7"/></svg>
<svg style="left:439.0px;top:56.8px" width="8" height="8" viewBox="0 0 8 8"><path d="M5.4 0.5C4.2 0.5 4.2 1 4.2 2.2S4.2 3.8 3 4C4.2 4.2 4.2 4.6 4.2 5.8S4.2 7.5 5.4 7.5" fill="none" stroke="#555" stroke-width=".7"/></svg>
<svg style="left:449.6px;top:56.8px" width="8" height="8" viewBox="0 0 8 8"><path d="M2.6 0.5C3.8 0.5 3.8 1 3.8 2.2S3.8 3.8 5 4C3.8 4.2 3.8 4.6 3.8 5.8S3.8 7.5 2.6 7.5" fill="none" stroke="#555" stroke-width=".7"/></svg>
<svg style="left:460.0px;top:56.8px" width="8" height="8" viewBox="0 0 8 8"><path d="M4 0.5l1 2.4 2.6.2-2 1.7.7 2.6L4 6 1.7 7.4l.7-2.6-2-1.7 2.6-.2z" fill="none" stroke="#555" stroke-width=".7"/></svg>
<svg style="left:483px;top:35.4px" width="15" height="14.6" viewBox="0 0 15 14.6">
<rect x="3" y="3" width="8.4" height="8.2" fill="#f5c77e" stroke="#e9a552" stroke-width=".7"/>
<rect x="0.5" y="0.5" width="5.2" height="5" fill="#fff" stroke="#555" stroke-width=".8"/>
<rect x="9" y="8.8" width="5.4" height="5.2" fill="#fff" stroke="#555" stroke-width=".8"/></svg>
<div class="t" id="t51" style="top:49.70px;height:13px;line-height:13px;font-size:6.5px;color:#444;left:479.7px;transform:scaleX(0.8778);transform-origin:0 50%;">Arrange</div>
<svg style="left:488.40px;top:63.10px" width="3.20" height="2.00" viewBox="0 0 3.2 2"><path d="M0 0h3.2L1.6 1.9z" fill="#666"/></svg>
<svg style="left:505px;top:35.4px" width="15" height="14.6" viewBox="0 0 15 14.6">
<rect x="0.5" y="0.5" width="13.6" height="13" fill="#f0f0f0" stroke="#c2c2c2" stroke-width=".9"/>
<path d="M13.6 3.6L8.4 10l-2.6 1.4 1-2.8 5.6-6z" fill="#e0e0e0" stroke="#bdbdbd" stroke-width=".7"/></svg>
<div class="t" id="t52" style="top:49.70px;height:13px;line-height:13px;font-size:6.5px;color:#a6a6a6;left:505px;transform:scaleX(0.8421);transform-origin:0 50%;">Quick</div>
<div class="t" id="t53" style="top:57.40px;height:13px;line-height:13px;font-size:6.5px;color:#a6a6a6;left:502.7px;transform:scaleX(0.8473);transform-origin:0 50%;">Styles</div>
<svg style="left:519.52px;top:63.48px" width="2.56" height="1.60" viewBox="0 0 3.2 2"><path d="M0 0h3.2L1.6 1.9z" fill="#a6a6a6"/></svg>
<svg style="left:524.5px;top:35.4px" width="7.4" height="8.4" viewBox="0 0 7.4 8.4"><path d="M3.2 0.6L6.4 3.6 3.6 5.6 0.8 3z" fill="none" stroke="#a6a6a6" stroke-width=".7"/><path d="M6.6 4.4c.5.7.5 1.2 0 1.4-.5-.2-.5-.7 0-1.4z" fill="#a6a6a6"/><rect x="0" y="6.8" width="7.4" height="1.5" fill="#c8c8c8"/></svg>
<div class="t" id="t54" style="top:32.40px;height:13px;line-height:13px;font-size:6.5px;color:#a6a6a6;left:534px;transform:scaleX(0.8649);transform-origin:0 50%;">Shape Fill</div>
<svg style="left:560.92px;top:39.08px" width="2.56" height="1.60" viewBox="0 0 3.2 2"><path d="M0 0h3.2L1.6 1.9z" fill="#a6a6a6"/></svg>
<svg style="left:524.5px;top:46px" width="7.6" height="8.4" viewBox="0 0 7.6 8.4"><path d="M0.5 0.5h6.4v4.8H0.5z" fill="none" stroke="#a6a6a6" stroke-width=".7"/><path d="M6.4 1.2L3.2 4.6l-1 .4.3-1.1L5.6.6z" fill="#f3f2f1" stroke="#a6a6a6" stroke-width=".6"/><rect x="0" y="6.8" width="7.6" height="1.5" fill="#c8c8c8"/></svg>
<div class="t" id="t55" style="top:43.30px;height:13px;line-height:13px;font-size:6.5px;color:#a6a6a6;left:534px;transform:scaleX(0.8737);transform-origin:0 50%;">Shape Outline</div>
<svg style="left:572.32px;top:49.88px" width="2.56" height="1.60" viewBox="0 0 3.2 2"><path d="M0 0h3.2L1.6 1.9z" fill="#a6a6a6"/></svg>
<svg style="left:524.2px;top:57px" width="8" height="7.6" viewBox="0 0 8 7.6"><ellipse cx="4.4" cy="4.6" rx="3.4" ry="2.6" fill="#d8d8d8"/><path d="M0.5 2.2l3-1.6 3.4 1.4v2.6l-3.2 1.8L0.5 4.8z" fill="#f3f2f1" stroke="#a6a6a6" stroke-width=".7"/></svg>
<div class="t" id="t56" style="top:54.40px;height:13px;line-height:13px;font-size:6.5px;color:#a6a6a6;left:534px;transform:scaleX(0.8672);transform-origin:0 50%;">Shape Effects</div>
<svg style="left:571.52px;top:60.58px" width="2.56" height="1.60" viewBox="0 0 3.2 2"><path d="M0 0h3.2L1.6 1.9z" fill="#a6a6a6"/></svg>
<div class="t" id="t57" style="top:69.00px;height:12px;line-height:12px;font-size:6.0px;color:#4c4b4a;left:478px;transform:scaleX(0.8857);transform-origin:0 50%;">Drawing</div>
<svg style="left:571.3px;top:72.8px" width="4.6" height="4.6" viewBox="0 0 4.6 4.6"><path d="M0.3 3.4V0.3h3.1M2 2l2 2M4.2 2.4v1.8H2.4" fill="none" stroke="#8a8886" stroke-width=".6"/></svg>
<div class="a" style="left:577px;top:35px;width:1px;height:41px;background:#e0dedc;"></div>
<svg style="left:581.6px;top:35.6px" width="8" height="8" viewBox="0 0 8 8"><circle cx="4.9" cy="3" r="2.5" fill="none" stroke="#444" stroke-width=".8"/><path d="M3.1 4.8L0.5 7.5" stroke="#444" stroke-width=".9"/></svg>
<div class="t" id="t58" style="top:32.40px;height:13px;line-height:13px;font-size:6.5px;color:#444;left:591px;transform:scaleX(0.8454);transform-origin:0 50%;">Find</div>
<svg style="left:581px;top:45.6px" width="9" height="9" viewBox="0 0 9 9"><path d="M3.6 0.4v3.4M3.6 2.4a1.1 1.1 0 1 1 0 1.4" fill="none" stroke="#9b4fc4" stroke-width=".7"/><path d="M2.4 6.2a1.3 1.3 0 1 0 0 1.9M6.2 6a1.3 1.3 0 1 0 0 2" fill="none" stroke="#2b7cd3" stroke-width=".7"/><path d="M0.4 2.2c0-1.2 1-1.6 1.8-1.2M7.6 3.4c.8.8.6 1.8-.2 2.2" fill="none" stroke="#2b7cd3" stroke-width=".6"/></svg>
<div class="t" id="t59" style="top:43.30px;height:13px;line-height:13px;font-size:6.5px;color:#444;left:591px;transform:scaleX(0.8676);transform-origin:0 50%;">Replace</div>
<svg style="left:615.20px;top:49.70px" width="3.20" height="2.00" viewBox="0 0 3.2 2"><path d="M0 0h3.2L1.6 1.9z" fill="#666"/></svg>
<svg style="left:582.6px;top:56.6px" width="7" height="8.4" viewBox="0 0 7 8.4"><path d="M0.8 0.6v6.6l1.7-1.6 1.3 2.6 1-.5-1.3-2.5h2.3z" fill="#fff" stroke="#444" stroke-width=".7"/></svg>
<div class="t" id="t60" style="top:54.40px;height:13px;line-height:13px;font-size:6.5px;color:#444;left:591px;transform:scaleX(0.8574);transform-origin:0 50%;">Select</div>
<svg style="left:607.60px;top:60.40px" width="3.20" height="2.00" viewBox="0 0 3.2 2"><path d="M0 0h3.2L1.6 1.9z" fill="#666"/></svg>
<div class="t" id="t61" style="top:69.00px;height:12px;line-height:12px;font-size:6.0px;color:#4c4b4a;left:592px;transform:scaleX(0.8715);transform-origin:0 50%;">Editing</div>
<div class="a" style="left:622px;top:35px;width:1px;height:41px;background:#e0dedc;"></div>
<svg style="left:638.5px;top:37px" width="11" height="11.5" viewBox="0 0 11 11.5">
<path d="M5.6 0.3l4.4 2.4v5l-4.4 2.6-4.4-2.6v-5z" fill="#1565c8"/>
<path d="M5.6 0.3l4.4 2.4-4.4 2.5-4.4-2.5z" fill="#2f83e6"/>
<circle cx="2.8" cy="8.6" r="2.5" fill="#0f55b4"/><circle cx="2.8" cy="8.6" r="1.5" fill="#2b7cd3"/></svg>
<div class="t" id="t62" style="top:49.20px;height:13px;line-height:13px;font-size:6.5px;color:#444;left:494.70px;width:300px;text-align:center;transform:scaleX(0.8607);transform-origin:50% 50%;">Show</div>
<div class="t" id="t63" style="top:57.40px;height:13px;line-height:13px;font-size:6.5px;color:#444;left:494.70px;width:300px;text-align:center;transform:scaleX(0.8445);transform-origin:50% 50%;">Taskpane</div>
<div class="t" id="t64" style="top:69.00px;height:12px;line-height:12px;font-size:6.0px;color:#4c4b4a;left:624px;transform:scaleX(0.8566);transform-origin:0 50%;">Commands Group</div>
<div class="a" style="left:667px;top:35px;width:1px;height:41px;background:#e0dedc;"></div>
<svg style="left:758.8px;top:72.6px" width="5.6" height="3.6" viewBox="0 0 5.6 3.6"><path d="M0.4 3.2l2.4-2.6 2.4 2.6" fill="none" stroke="#555" stroke-width=".8"/></svg>
<div class="a" style="left:143.5px;top:80px;width:7px;height:321.5px;background:#ebebeb;"></div>
<div class="a" style="left:143.5px;top:80px;width:7px;height:8px;background:#fff;border:1px solid #dadada;"></div>
<svg style="left:145.2px;top:82.8px" width="3.6" height="2.4" viewBox="0 0 3.6 2.4"><path d="M0 2.2h3.6L1.8 0z" fill="#555"/></svg>
<div class="a" style="left:143.5px;top:88px;width:7px;height:159px;background:#fff;border:1px solid #dadada;"></div>
<div class="a" style="left:143.5px;top:392.5px;width:7px;height:9px;background:#fff;border:1px solid #dadada;"></div>
<svg style="left:145.2px;top:395.6px" width="3.6" height="2.4" viewBox="0 0 3.6 2.4"><path d="M0 0h3.6L1.8 2.2z" fill="#555"/></svg>
<div class="a" style="left:151.6px;top:80px;width:2.4px;height:321.5px;background:#efefef;"></div>
<div class="a" style="left:151.2px;top:80px;width:0.6px;height:321.5px;background:#d6d6d6;"></div>
<div class="a" style="left:215.5px;top:80.6px;width:495.5px;height:7.6px;background:#fff;"></div>
<div class="a" style="left:156px;top:97px;width:7px;height:279px;background:#fff;"></div>
<svg style="left:215px;top:81px" width="496" height="7" viewBox="0 0 496 7"><rect x="1.25" y="3.2" width=".6" height=".7" fill="#a6a6a6"/><rect x="5.90" y="2.2" width=".6" height="2.6" fill="#8a8a8a"/><rect x="10.55" y="3.2" width=".6" height=".7" fill="#a6a6a6"/><rect x="15.20" y="3.2" width=".6" height=".7" fill="#a6a6a6"/><rect x="19.85" y="3.2" width=".6" height=".7" fill="#a6a6a6"/><rect x="29.15" y="3.2" width=".6" height=".7" fill="#a6a6a6"/><rect x="33.80" y="3.2" width=".6" height=".7" fill="#a6a6a6"/><rect x="38.45" y="3.2" width=".6" height=".7" fill="#a6a6a6"/><rect x="43.10" y="2.2" width=".6" height="2.6" fill="#8a8a8a"/><rect x="47.75" y="3.2" width=".6" height=".7" fill="#a6a6a6"/><rect x="52.40" y="3.2" width=".6" height=".7" fill="#a6a6a6"/><rect x="57.05" y="3.2" width=".6" height=".7" fill="#a6a6a6"/><rect x="66.35" y="3.2" width=".6" height=".7" fill="#a6a6a6"/><rect x="71.00" y="3.2" width=".6" height=".7" fill="#a6a6a6"/><rect x="75.65" y="3.2" width=".6" height=".7" fill="#a6a6a6"/><rect x="80.30" y="2.2" width=".6" height="2.6" fill="#8a8a8a"/><rect x="84.95" y="3.2" width=".6" height=".7" fill="#a6a6a6"/><rect x="89.60" y="3.2" width=".6" height=".7" fill="#a6a6a6"/><rect x="94.25" y="3.2" width=".6" height=".7" fill="#a6a6a6"/><rect x="103.55" y="3.2" width=".6" height=".7" fill="#a6a6a6"/><rect x="108.20" y="3.2" width=".6" height=".7" fill="#a6a6a6"/><rect x="112.85" y="3.2" width=".6" height=".7" fill="#a6a6a6"/><rect x="117.50" y="2.2" width=".6" height="2.6" fill="#8a8a8a"/><rect x="122.15" y="3.2" width=".6" height=".7" fill="#a6a6a6"/><rect x="126.80" y="3.2" width=".6" height=".7" fill="#a6a6a6"/><rect x="131.45" y="3.2" width=".6" height=".7" fill="#a6a6a6"/><rect x="140.75" y="3.2" width=".6" height=".7" fill="#a6a6a6"/><rect x="145.40" y="3.2" width=".6" height=".7" fill="#a6a6a6"/><rect x="150.05" y="3.2" width=".6" height=".7" fill="#a6a6a6"/><rect x="154.70" y="2.2" width=".6" height="2.6" fill="#8a8a8a"/><rect x="159.35" y="3.2" width=".6" height=".7" fill="#a6a6a6"/><rect x="164.00" y="3.2" width=".6" height=".7" fill="#a6a6a6"/><rect x="168.65" y="3.2" width=".6" height=".7" fill="#a6a6a6"/><rect x="177.95" y="3.2" width=".6" height=".7" fill="#a6a6a6"/><rect x="182.60" y="3.2" width=".6" height=".7" fill="#a6a6a6"/><rect x="187.25" y="3.2" width=".6" height=".7" fill="#a6a6a6"/><rect x="191.90" y="2.2" width=".6" height="2.6" fill="#8a8a8a"/><rect x="196.55" y="3.2" width=".6" height=".7" fill="#a6a6a6"/><rect x="201.20" y="3.2" width=".6" height=".7" fill="#a6a6a6"/><rect x="205.85" y="3.2" width=".6" height=".7" fill="#a6a6a6"/><rect x="215.15" y="3.2" width=".6" height=".7" fill="#a6a6a6"/><rect x="219.80" y="3.2" width=".6" height=".7" fill="#a6a6a6"/><rect x="224.45" y="3.2" width=".6" height=".7" fill="#a6a6a6"/><rect x="229.10" y="2.2" width=".6" height="2.6" fill="#8a8a8a"/><rect x="233.75" y="3.2" width=".6" height=".7" fill="#a6a6a6"/><rect x="238.40" y="3.2" width=".6" height=".7" fill="#a6a6a6"/><rect x="243.05" y="3.2" width=".6" height=".7" fill="#a6a6a6"/><rect x="252.35" y="3.2" width=".6" height=".7" fill="#a6a6a6"/><rect x="257.00" y="3.2" width=".6" height=".7" fill="#a6a6a6"/><rect x="261.65" y="3.2" width=".6" height=".7" fill="#a6a6a6"/><rect x="266.30" y="2.2" width=".6" height="2.6" fill="#8a8a8a"/><rect x="270.95" y="3.2" width=".6" height=".7" fill="#a6a6a6"/><rect x="275.60" y="3.2" width=".6" height=".7" fill="#a6a6a6"/><rect x="280.25" y="3.2" width=".6" height=".7" fill="#a6a6a6"/><rect x="289.55" y="3.2" width=".6" height=".7" fill="#a6a6a6"/><rect x="294.20" y="3.2" width=".6" height=".7" fill="#a6a6a6"/><rect x="298.85" y="3.2" width=".6" height=".7" fill="#a6a6a6"/><rect x="303.50" y="2.2" width=".6" height="2.6" fill="#8a8a8a"/><rect x="308.15" y="3.2" width=".6" height=".7" fill="#a6a6a6"/><rect x="312.80" y="3.2" width=".6" height=".7" fill="#a6a6a6"/><rect x="317.45" y="3.2" width=".6" height=".7" fill="#a6a6a6"/><rect x="326.75" y="3.2" width=".6" height=".7" fill="#a6a6a6"/><rect x="331.40" y="3.2" width=".6" height=".7" fill="#a6a6a6"/><rect x="336.05" y="3.2" width=".6" height=".7" fill="#a6a6a6"/><rect x="340.70" y="2.2" width=".6" height="2.6" fill="#8a8a8a"/><rect x="345.35" y="3.2" width=".6" height=".7" fill="#a6a6a6"/><rect x="350.00" y="3.2" width=".6" height=".7" fill="#a6a6a6"/><rect x="354.65" y="3.2" width=".6" height=".7" fill="#a6a6a6"/><rect x="363.95" y="3.2" width=".6" height=".7" fill="#a6a6a6"/><rect x="368.60" y="3.2" width=".6" height=".7" fill="#a6a6a6"/><rect x="373.25" y="3.2" width=".6" height=".7" fill="#a6a6a6"/><rect x="377.90" y="2.2" width=".6" height="2.6" fill="#8a8a8a"/><rect x="382.55" y="3.2" width=".6" height=".7" fill="#a6a6a6"/><rect x="387.20" y="3.2" width=".6" height=".7" fill="#a6a6a6"/><rect x="391.85" y="3.2" width=".6" height=".7" fill="#a6a6a6"/><rect x="401.15" y="3.2" width=".6" height=".7" fill="#a6a6a6"/><rect x="405.80" y="3.2" width=".6" height=".7" fill="#a6a6a6"/><rect x="410.45" y="3.2" width=".6" height=".7" fill="#a6a6a6"/><rect x="415.10" y="2.2" width=".6" height="2.6" fill="#8a8a8a"/><rect x="419.75" y="3.2" width=".6" height=".7" fill="#a6a6a6"/><rect x="424.40" y="3.2" width=".6" height=".7" fill="#a6a6a6"/><rect x="429.05" y="3.2" width=".6" height=".7" fill="#a6a6a6"/><rect x="438.35" y="3.2" width=".6" height=".7" fill="#a6a6a6"/><rect x="443.00" y="3.2" width=".6" height=".7" fill="#a6a6a6"/><rect x="447.65" y="3.2" width=".6" height=".7" fill="#a6a6a6"/><rect x="452.30" y="2.2" width=".6" height="2.6" fill="#8a8a8a"/><rect x="456.95" y="3.2" width=".6" height=".7" fill="#a6a6a6"/><rect x="461.60" y="3.2" width=".6" height=".7" fill="#a6a6a6"/><rect x="466.25" y="3.2" width=".6" height=".7" fill="#a6a6a6"/><rect x="475.55" y="3.2" width=".6" height=".7" fill="#a6a6a6"/><rect x="480.20" y="3.2" width=".6" height=".7" fill="#a6a6a6"/><rect x="484.85" y="3.2" width=".6" height=".7" fill="#a6a6a6"/><rect x="489.50" y="2.2" width=".6" height="2.6" fill="#8a8a8a"/><rect x="494.15" y="3.2" width=".6" height=".7" fill="#a6a6a6"/></svg>
<div class="t" id="t65" style="top:79.60px;height:10px;line-height:10px;font-size:5px;color:#666;left:89.80px;width:300px;text-align:center;">6</div>
<div class="t" id="t66" style="top:79.60px;height:10px;line-height:10px;font-size:5px;color:#666;left:127.00px;width:300px;text-align:center;">5</div>
<div class="t" id="t67" style="top:79.60px;height:10px;line-height:10px;font-size:5px;color:#666;left:164.20px;width:300px;text-align:center;">4</div>
<div class="t" id="t68" style="top:79.60px;height:10px;line-height:10px;font-size:5px;color:#666;left:201.40px;width:300px;text-align:center;">3</div>
<div class="t" id="t69" style="top:79.60px;height:10px;line-height:10px;font-size:5px;color:#666;left:238.60px;width:300px;text-align:center;">2</div>
<div class="t" id="t70" style="top:79.60px;height:10px;line-height:10px;font-size:5px;color:#666;left:275.80px;width:300px;text-align:center;">1</div>
<div class="t" id="t71" style="top:79.60px;height:10px;line-height:10px;font-size:5px;color:#666;left:313.00px;width:300px;text-align:center;">0</div>
<div class="t" id="t72" style="top:79.60px;height:10px;line-height:10px;font-size:5px;color:#666;left:350.20px;width:300px;text-align:center;">1</div>
<div class="t" id="t73" style="top:79.60px;height:10px;line-height:10px;font-size:5px;color:#666;left:387.40px;width:300px;text-align:center;">2</div>
<div class="t" id="t74" style="top:79.60px;height:10px;line-height:10px;font-size:5px;color:#666;left:424.60px;width:300px;text-align:center;">3</div>
<div class="t" id="t75" style="top:79.60px;height:10px;line-height:10px;font-size:5px;color:#666;left:461.80px;width:300px;text-align:center;">4</div>
<div class="t" id="t76" style="top:79.60px;height:10px;line-height:10px;font-size:5px;color:#666;left:499.00px;width:300px;text-align:center;">5</div>
<div class="t" id="t77" style="top:79.60px;height:10px;line-height:10px;font-size:5px;color:#666;left:536.20px;width:300px;text-align:center;">6</div>
<svg style="left:156px;top:97px" width="7" height="279" viewBox="0 0 7 279"><rect y="4.35" x="3.2" height=".6" width=".7" fill="#a6a6a6"/><rect y="9.00" x="2.2" height=".6" width="2.6" fill="#8a8a8a"/><rect y="13.65" x="3.2" height=".6" width=".7" fill="#a6a6a6"/><rect y="18.30" x="3.2" height=".6" width=".7" fill="#a6a6a6"/><rect y="22.95" x="3.2" height=".6" width=".7" fill="#a6a6a6"/><rect y="32.25" x="3.2" height=".6" width=".7" fill="#a6a6a6"/><rect y="36.90" x="3.2" height=".6" width=".7" fill="#a6a6a6"/><rect y="41.55" x="3.2" height=".6" width=".7" fill="#a6a6a6"/><rect y="46.20" x="2.2" height=".6" width="2.6" fill="#8a8a8a"/><rect y="50.85" x="3.2" height=".6" width=".7" fill="#a6a6a6"/><rect y="55.50" x="3.2" height=".6" width=".7" fill="#a6a6a6"/><rect y="60.15" x="3.2" height=".6" width=".7" fill="#a6a6a6"/><rect y="69.45" x="3.2" height=".6" width=".7" fill="#a6a6a6"/><rect y="74.10" x="3.2" height=".6" width=".7" fill="#a6a6a6"/><rect y="78.75" x="3.2" height=".6" width=".7" fill="#a6a6a6"/><rect y="83.40" x="2.2" height=".6" width="2.6" fill="#8a8a8a"/><rect y="88.05" x="3.2" height=".6" width=".7" fill="#a6a6a6"/><rect y="92.70" x="3.2" height=".6" width=".7" fill="#a6a6a6"/><rect y="97.35" x="3.2" height=".6" width=".7" fill="#a6a6a6"/><rect y="106.65" x="3.2" height=".6" width=".7" fill="#a6a6a6"/><rect y="111.30" x="3.2" height=".6" width=".7" fill="#a6a6a6"/><rect y="115.95" x="3.2" height=".6" width=".7" fill="#a6a6a6"/><rect y="120.60" x="2.2" height=".6" width="2.6" fill="#8a8a8a"/><rect y="125.25" x="3.2" height=".6" width=".7" fill="#a6a6a6"/><rect y="129.90" x="3.2" height=".6" width=".7" fill="#a6a6a6"/><rect y="134.55" x="3.2" height=".6" width=".7" fill="#a6a6a6"/><rect y="143.85" x="3.2" height=".6" width=".7" fill="#a6a6a6"/><rect y="148.50" x="3.2" height=".6" width=".7" fill="#a6a6a6"/><rect y="153.15" x="3.2" height=".6" width=".7" fill="#a6a6a6"/><rect y="157.80" x="2.2" height=".6" width="2.6" fill="#8a8a8a"/><rect y="162.45" x="3.2" height=".6" width=".7" fill="#a6a6a6"/><rect y="167.10" x="3.2" height=".6" width=".7" fill="#a6a6a6"/><rect y="171.75" x="3.2" height=".6" width=".7" fill="#a6a6a6"/><rect y="181.05" x="3.2" height=".6" width=".7" fill="#a6a6a6"/><rect y="185.70" x="3.2" height=".6" width=".7" fill="#a6a6a6"/><rect y="190.35" x="3.2" height=".6" width=".7" fill="#a6a6a6"/><rect y="195.00" x="2.2" height=".6" width="2.6" fill="#8a8a8a"/><rect y="199.65" x="3.2" height=".6" width=".7" fill="#a6a6a6"/><rect y="204.30" x="3.2" height=".6" width=".7" fill="#a6a6a6"/><rect y="208.95" x="3.2" height=".6" width=".7" fill="#a6a6a6"/><rect y="218.25" x="3.2" height=".6" width=".7" fill="#a6a6a6"/><rect y="222.90" x="3.2" height=".6" width=".7" fill="#a6a6a6"/><rect y="227.55" x="3.2" height=".6" width=".7" fill="#a6a6a6"/><rect y="232.20" x="2.2" height=".6" width="2.6" fill="#8a8a8a"/><rect y="236.85" x="3.2" height=".6" width=".7" fill="#a6a6a6"/><rect y="241.50" x="3.2" height=".6" width=".7" fill="#a6a6a6"/><rect y="246.15" x="3.2" height=".6" width=".7" fill="#a6a6a6"/><rect y="255.45" x="3.2" height=".6" width=".7" fill="#a6a6a6"/><rect y="260.10" x="3.2" height=".6" width=".7" fill="#a6a6a6"/><rect y="264.75" x="3.2" height=".6" width=".7" fill="#a6a6a6"/><rect y="269.40" x="2.2" height=".6" width="2.6" fill="#8a8a8a"/><rect y="274.05" x="3.2" height=".6" width=".7" fill="#a6a6a6"/></svg>
<div class="t" id="t78" style="top:119.90px;height:10px;line-height:10px;font-size:5px;color:#666;left:9.50px;width:300px;text-align:center;transform:rotate(-90deg);">3</div>
<div class="t" id="t79" style="top:157.10px;height:10px;line-height:10px;font-size:5px;color:#666;left:9.50px;width:300px;text-align:center;transform:rotate(-90deg);">2</div>
<div class="t" id="t80" style="top:194.30px;height:10px;line-height:10px;font-size:5px;color:#666;left:9.50px;width:300px;text-align:center;transform:rotate(-90deg);">1</div>
<div class="t" id="t81" style="top:231.50px;height:10px;line-height:10px;font-size:5px;color:#666;left:9.50px;width:300px;text-align:center;transform:rotate(-90deg);">0</div>
<div class="t" id="t82" style="top:268.70px;height:10px;line-height:10px;font-size:5px;color:#666;left:9.50px;width:300px;text-align:center;transform:rotate(-90deg);">1</div>
<div class="t" id="t83" style="top:305.90px;height:10px;line-height:10px;font-size:5px;color:#666;left:9.50px;width:300px;text-align:center;transform:rotate(-90deg);">2</div>
<div class="t" id="t84" style="top:343.10px;height:10px;line-height:10px;font-size:5px;color:#666;left:9.50px;width:300px;text-align:center;transform:rotate(-90deg);">3</div>
<div class="a" style="left:760.5px;top:80px;width:7.5px;height:302px;background:#f0f0f0;"></div>
<div class="a" style="left:760.5px;top:80px;width:7.5px;height:7.5px;background:#fff;border:1px solid #dadada;"></div>
<svg style="left:762.4px;top:82.6px" width="3.6" height="2.4" viewBox="0 0 3.6 2.4"><path d="M0 2.2h3.6L1.8 0z" fill="#555"/></svg>
<div class="a" style="left:760.5px;top:87.5px;width:7.5px;height:32px;background:#fff;border:1px solid #dadada;"></div>
<div class="a" style="left:760.5px;top:348px;width:7.5px;height:7.5px;background:#fff;border:1px solid #dadada;"></div>
<svg style="left:762.4px;top:350.8px" width="3.6" height="2.4" viewBox="0 0 3.6 2.4"><path d="M0 0h3.6L1.8 2.2z" fill="#555"/></svg>
<svg style="left:762px;top:357.4px" width="4.4" height="4.4" viewBox="0 0 4.4 4.4"><path d="M0.4 2l1.8-1.8L4 2zM0.4 4.2l1.8-1.8L4 4.2z" fill="#555"/></svg>
<svg style="left:762px;top:365.8px" width="4.4" height="4.4" viewBox="0 0 4.4 4.4"><path d="M0.4 0.2L2.2 2 4 0.2zM0.4 2.4l1.8 1.8L4 2.4z" fill="#555"/></svg>
<div class="a" style="left:215px;top:97px;width:496px;height:279px;background:#fff;box-shadow:0 0 0 .5px #d4d4d4;"></div>
<div class="a" style="left:215px;top:97px;width:496px;height:279px;"><svg style="left:0;top:0" width="496" height="279" viewBox="0 0 496 279"><defs>
<linearGradient id="s1gw" x1="0" x2="1" y1="0" y2="0"><stop offset="0" stop-color="#ececec"/><stop offset=".18" stop-color="#e2e2e2"/><stop offset=".5" stop-color="#cdcdcd"/><stop offset=".8" stop-color="#b9b9b9"/><stop offset=".93" stop-color="#bebebe"/><stop offset="1" stop-color="#d6d6d6"/></linearGradient>
<linearGradient id="s1bw" x1="0" x2="1" y1="0" y2="0"><stop offset="0" stop-color="#3a80f8"/><stop offset=".2" stop-color="#236df4"/><stop offset=".5" stop-color="#165fe8"/><stop offset=".74" stop-color="#2058d0"/><stop offset=".83" stop-color="#2a5ccc"/><stop offset=".87" stop-color="#3d7cee"/><stop offset="1" stop-color="#5e98f8"/></linearGradient>
<linearGradient id="s1bi" x1="0" x2="1" y1="0" y2="0"><stop offset="0" stop-color="#2361d8"/><stop offset=".45" stop-color="#2f70e8"/><stop offset="1" stop-color="#5b9afa"/></linearGradient>
<linearGradient id="s1gi" x1="0" x2="1" y1="0" y2="0"><stop offset="0" stop-color="#a9a9a9"/><stop offset=".5" stop-color="#c4c4c4"/><stop offset="1" stop-color="#dedede"/></linearGradient>
<radialGradient id="s1sh" cx=".5" cy=".5" r=".5"><stop offset="0" stop-color="#000" stop-opacity=".4"/><stop offset=".35" stop-color="#000" stop-opacity=".24"/><stop offset=".7" stop-color="#000" stop-opacity=".07"/><stop offset="1" stop-color="#000" stop-opacity="0"/></radialGradient>
<clipPath id="s1rim"><ellipse cx="248.2" cy="90" rx="84.3" ry="34"/></clipPath>
</defs><ellipse cx="248.2" cy="265.6" rx="42" ry="5.2" fill="url(#s1sh)"/><path d="M210.64 204.56A37.56 15.14 0 0 0 285.76 204.56L269.50 244.42A21.30 8.58 0 0 1 226.90 244.42Z" fill="url(#s1gw)"/><ellipse cx="248.2" cy="245.62" rx="19.80" ry="6.38" fill="#9d9d9d" opacity="0.33"/><path d="M210.64 204.56A37.56 15.14 0 0 0 285.76 204.56" fill="none" stroke="#ececec" stroke-width=".6" opacity=".3"/><path d="M195.16 166.63A53.04 21.37 0 0 0 301.24 166.63L285.76 204.56A37.56 15.14 0 0 1 210.64 204.56Z" fill="url(#s1gw)"/><ellipse cx="248.2" cy="205.76" rx="36.06" ry="12.94" fill="#9d9d9d" opacity="0.33"/><path d="M195.16 166.63A53.04 21.37 0 0 0 301.24 166.63" fill="none" stroke="#ececec" stroke-width=".6" opacity=".3"/><path d="M179.05 127.13A69.15 27.87 0 0 0 317.35 127.13L301.24 166.63A53.04 21.37 0 0 1 195.16 166.63Z" fill="url(#s1gw)"/><ellipse cx="248.2" cy="167.83" rx="51.54" ry="19.17" fill="#9d9d9d" opacity="0.33"/><path d="M179.05 127.13A69.15 27.87 0 0 0 317.35 127.13" fill="none" stroke="#ececec" stroke-width=".6" opacity=".3"/><path d="M163.90 90.00A84.30 33.97 0 0 0 332.50 90.00L317.35 127.13A69.15 27.87 0 0 1 179.05 127.13Z" fill="url(#s1bw)"/><ellipse cx="248.2" cy="90" rx="84.3" ry="34" fill="url(#s1bi)"/><path d="M242.2 56C246.2 86 278.2 112 310.2 118L338.2 90 308.2 50z" fill="#7db0ff" opacity=".16" clip-path="url(#s1rim)"/><ellipse cx="248.2" cy="128.13" rx="66.5" ry="27.6" fill="#3b5c9f" clip-path="url(#s1rim)"/><path d="M163.89999999999998 90A84.3 34 0 0 0 332.5 90" fill="none" stroke="#5c95ff" stroke-width=".6" opacity=".5"/><circle cx="320.4" cy="120.1" r="3.6" fill="#fff" stroke="#1560f2" stroke-width="3.4"/><circle cx="191.5" cy="158.6" r="3.6" fill="#fff" stroke="#1560f2" stroke-width="3.4"/><circle cx="288.9" cy="193.8" r="3.6" fill="#fff" stroke="#1560f2" stroke-width="3.4"/><circle cx="221.2" cy="231" r="3.6" fill="#fff" stroke="#1560f2" stroke-width="3.4"/><path d="M138.1 115.9l-5.2 4.5 5.2 4.6M145 115.9l5.2 4.5-5.2 4.6M143.4 114.4l-3.6 12.8" fill="none" stroke="#1560f2" stroke-width="1.55"/><rect x="349.35" y="89.85" width="14.9" height="9.9" rx=".5" fill="none" stroke="#1560f2" stroke-width="1.5"/><path d="M346.8 100.6h20.2v.6a1.5 1.5 0 0 1-1.5 1.5h-17.2a1.5 1.5 0 0 1-1.5-1.5z" fill="#1560f2"/><rect x="355.6" y="100.9" width="2.6" height=".7" fill="#cfe0ff"/><path d="M171.4 191.8a4.75 4.75 0 0 0-2.6 8.7v2.3h5.2v-2.3a4.75 4.75 0 0 0-2.6-8.7z" fill="#1560f2"/><path d="M169.1 204h4.6v.4a1.5 1.5 0 0 1-1.5 1.5h-1.6a1.5 1.5 0 0 1-1.5-1.5z" fill="#1560f2"/><path d="M169.6 195.6l1.8 2.4 1.8-2.4M171.4 198v4.6" fill="none" stroke="#fff" stroke-width=".9"/><path d="M171.4 187.3v2.8M164.9 190l1.9 1.9M177.9 190l-1.9 1.9M162.1 196.5h3.4M177.3 196.5h3.4" stroke="#1560f2" stroke-width="1.3" stroke-linecap="round"/><circle cx="323.4" cy="179.5" r="6.6" fill="none" stroke="#1560f2" stroke-width="2.2"/><circle cx="323.4" cy="179.5" r="3.3" fill="none" stroke="#1560f2" stroke-width="1.6"/><path d="M323.4 179.5l5.4-5.4" stroke="#1560f2" stroke-width="1.4"/><path d="M327.6 175.2l-.25-2.5 1.9-2.2.75 1.3 1.35-.25-.25 1.35 1.3.75-2.2 1.9z" fill="#1560f2" stroke="#1560f2" stroke-width=".5" stroke-linejoin="round"/></svg>
<div class="t" id="t85" style="top:126.80px;height:29px;line-height:29px;font-size:14.4px;color:#fff;font-weight:700;left:98.20px;width:300px;text-align:center;">A</div>
<div class="t" id="t86" style="top:158.80px;height:29px;line-height:29px;font-size:14.4px;color:#fff;font-weight:700;left:98.20px;width:300px;text-align:center;">B</div>
<div class="t" id="t87" style="top:191.00px;height:29px;line-height:29px;font-size:14.4px;color:#fff;font-weight:700;left:98.20px;width:300px;text-align:center;">C</div>
<div class="t" id="t88" style="top:222.70px;height:29px;line-height:29px;font-size:14.4px;color:#fff;font-weight:700;left:98.20px;width:300px;text-align:center;">D</div>
<div class="t" id="t89" style="top:8.70px;height:35px;line-height:35px;font-size:17.6px;color:#404040;left:30px;transform:scaleX(0.9378);transform-origin:0 50%;">4 Level Semi Transparent Funnel Diagram</div>
<div class="t" id="t90" style="top:133.90px;height:21px;line-height:21px;font-size:10.4px;color:#444444;font-weight:700;right:345.00px;transform:scaleX(1.0090);transform-origin:100% 50%;">Sample Text</div>
<div class="t" id="t91" style="top:152.40px;height:17px;line-height:17px;font-size:8.3px;color:#858585;right:345.00px;">This is a sample text. Insert</div>
<div class="t" id="t92" style="top:162.40px;height:17px;line-height:17px;font-size:8.3px;color:#858585;right:345.00px;transform:scaleX(1.0053);transform-origin:100% 50%;">your desired text here.</div>
<div class="t" id="t93" style="top:211.70px;height:21px;line-height:21px;font-size:10.4px;color:#444444;font-weight:700;right:315.00px;transform:scaleX(1.0090);transform-origin:100% 50%;">Sample Text</div>
<div class="t" id="t94" style="top:230.20px;height:17px;line-height:17px;font-size:8.3px;color:#858585;right:315.00px;">This is a sample text. Insert</div>
<div class="t" id="t95" style="top:240.20px;height:17px;line-height:17px;font-size:8.3px;color:#858585;right:315.00px;transform:scaleX(1.0053);transform-origin:100% 50%;">your desired text here.</div>
<div class="t" id="t96" style="top:105.00px;height:21px;line-height:21px;font-size:10.4px;color:#444444;font-weight:700;left:345.3px;transform:scaleX(1.0090);transform-origin:0 50%;">Sample Text</div>
<div class="t" id="t97" style="top:123.50px;height:17px;line-height:17px;font-size:8.3px;color:#858585;left:345.3px;">This is a sample text. Insert</div>
<div class="t" id="t98" style="top:133.50px;height:17px;line-height:17px;font-size:8.3px;color:#858585;left:345.3px;transform:scaleX(1.0053);transform-origin:0 50%;">your desired text here.</div>
<div class="t" id="t99" style="top:191.90px;height:21px;line-height:21px;font-size:10.4px;color:#444444;font-weight:700;left:315px;transform:scaleX(1.0090);transform-origin:0 50%;">Sample Text</div>
<div class="t" id="t100" style="top:210.40px;height:17px;line-height:17px;font-size:8.3px;color:#858585;left:315px;">This is a sample text. Insert</div>
<div class="t" id="t101" style="top:220.40px;height:17px;line-height:17px;font-size:8.3px;color:#858585;left:315px;transform:scaleX(1.0053);transform-origin:0 50%;">your desired text here.</div></div>
<div class="a" style="left:154px;top:381.8px;width:614px;height:1.7px;background:#efefef;"></div>
<div class="t" id="t102" style="top:383.50px;height:15px;line-height:15px;font-size:7.6px;color:#666;left:158.6px;transform:scaleX(0.9656);transform-origin:0 50%;">Click to add notes</div>
<div class="a" style="left:0px;top:401.5px;width:768px;height:10.5px;background:#f3f2f1;"></div>
<div class="a" style="left:0px;top:401px;width:768px;height:0.8px;background:#d8d6d4;"></div>
<div class="t" id="t103" style="top:400.80px;height:12px;line-height:12px;font-size:5.8px;color:#555;left:3.5px;transform:scaleX(0.9133);transform-origin:0 50%;">Slide 1 of 8</div>
<svg style="left:38px;top:403.2px" width="8" height="7" viewBox="0 0 8 7"><path d="M0.4 0.4h4.4v5.2H0.4z" fill="none" stroke="#777" stroke-width=".6"/><path d="M3.6 4.2l1.4 1.6 2.6-3.4" fill="none" stroke="#777" stroke-width=".7"/></svg>
<div class="t" id="t104" style="top:400.80px;height:12px;line-height:12px;font-size:5.8px;color:#555;left:51.5px;transform:scaleX(0.8854);transform-origin:0 50%;">English (United States)</div>
<svg style="left:577.5px;top:403.6px" width="6" height="6" viewBox="0 0 6 6"><path d="M0.4 5.6h5.2M0.8 4.2h4.4M3 0.4l1.8 2.4H1.2z" fill="none" stroke="#555" stroke-width=".6"/></svg>
<div class="t" id="t105" style="top:400.80px;height:12px;line-height:12px;font-size:5.8px;color:#555;left:585.5px;transform:scaleX(0.8907);transform-origin:0 50%;">Notes</div>
<div class="a" style="left:608px;top:401.6px;width:16.5px;height:10.4px;background:#c8c6c4;"></div>
<svg style="left:612.2px;top:403.6px" width="7.4" height="6.2" viewBox="0 0 7.4 6.2"><path d="M0.4 0.4h6.6v5.4H0.4zM2.4 0.4v5.4M2.4 3.8h4.6" fill="none" stroke="#555" stroke-width=".6"/></svg>
<svg style="left:629px;top:403.6px" width="7" height="6.2" viewBox="0 0 7 6.2"><path d="M0.4 0.4h2.4v2H0.4zM4.2 0.4h2.4v2H4.2zM0.4 3.8h2.4v2H0.4zM4.2 3.8h2.4v2H4.2z" fill="none" stroke="#777" stroke-width=".6"/></svg>
<svg style="left:647px;top:403.6px" width="7.4" height="6.2" viewBox="0 0 7.4 6.2"><path d="M3.7 1C2.8 0.2 1.4 0.2 0.4 0.6v4.8c1-.4 2.4-.4 3.3.4.9-.8 2.3-.8 3.3-.4V0.6C6 0.2 4.6 0.2 3.7 1zM3.7 1v4.8" fill="none" stroke="#777" stroke-width=".6"/></svg>
<svg style="left:663px;top:403.4px" width="7.4" height="6.6" viewBox="0 0 7.4 6.6"><path d="M0.2 0.5h7M0.8 0.6v3.4h5.8V0.6M3.7 4v1.8M2.2 6.2h3" fill="none" stroke="#777" stroke-width=".6"/></svg>
<div class="a" style="left:677px;top:406.6px;width:4px;height:0.8px;background:#555;"></div>
<div class="a" style="left:683px;top:406.7px;width:50px;height:0.6px;background:#c4c2c0;"></div>
<div class="a" style="left:707.2px;top:405.4px;width:0.6px;height:3.2px;background:#a19f9d;"></div>
<div class="a" style="left:701.2px;top:404px;width:1.7px;height:5.6px;background:#555;"></div>
<div class="a" style="left:734px;top:406.6px;width:4.4px;height:0.8px;background:#555;"></div>
<div class="a" style="left:735.8px;top:404.8px;width:0.8px;height:4.4px;background:#555;"></div>
<div class="t" id="t106" style="top:400.80px;height:12px;line-height:12px;font-size:5.8px;color:#555;left:743px;transform:scaleX(0.8183);transform-origin:0 50%;">78%</div>
<svg style="left:759px;top:403.6px" width="6.6" height="6.4" viewBox="0 0 6.6 6.4"><path d="M0.4 2V0.4h1.8M4.4 0.4h1.8V2M6.2 4.4V6H4.4M2.2 6H0.4V4.4" fill="none" stroke="#777" stroke-width=".7"/><rect x="2.2" y="2.2" width="2.2" height="2" fill="none" stroke="#777" stroke-width=".5"/></svg>
<div class="a" style="left:16.3px;top:87.3px;width:119.3px;height:68.55px;background:#e8693f;"></div>
<div class="a" style="left:17.7px;top:88.7px;width:116.5px;height:65.75px;background:#fff;"></div>
<div class="a th" style="left:18px;top:89px;width:116px;height:65.25px;overflow:hidden;background:#fff;"><div class="a" style="left:0;top:0;width:496px;height:279px;transform:scale(0.23387);transform-origin:0 0;"><svg style="left:0;top:0" width="496" height="279" viewBox="0 0 496 279"><defs>
<linearGradient id="s2gw" x1="0" x2="1" y1="0" y2="0"><stop offset="0" stop-color="#ececec"/><stop offset=".18" stop-color="#e2e2e2"/><stop offset=".5" stop-color="#cdcdcd"/><stop offset=".8" stop-color="#b9b9b9"/><stop offset=".93" stop-color="#bebebe"/><stop offset="1" stop-color="#d6d6d6"/></linearGradient>
<linearGradient id="s2bw" x1="0" x2="1" y1="0" y2="0"><stop offset="0" stop-color="#3a80f8"/><stop offset=".2" stop-color="#236df4"/><stop offset=".5" stop-color="#165fe8"/><stop offset=".74" stop-color="#2058d0"/><stop offset=".83" stop-color="#2a5ccc"/><stop offset=".87" stop-color="#3d7cee"/><stop offset="1" stop-color="#5e98f8"/></linearGradient>
<linearGradient id="s2bi" x1="0" x2="1" y1="0" y2="0"><stop offset="0" stop-color="#2361d8"/><stop offset=".45" stop-color="#2f70e8"/><stop offset="1" stop-color="#5b9afa"/></linearGradient>
<linearGradient id="s2gi" x1="0" x2="1" y1="0" y2="0"><stop offset="0" stop-color="#a9a9a9"/><stop offset=".5" stop-color="#c4c4c4"/><stop offset="1" stop-color="#dedede"/></linearGradient>
<radialGradient id="s2sh" cx=".5" cy=".5" r=".5"><stop offset="0" stop-color="#000" stop-opacity=".4"/><stop offset=".35" stop-color="#000" stop-opacity=".24"/><stop offset=".7" stop-color="#000" stop-opacity=".07"/><stop offset="1" stop-color="#000" stop-opacity="0"/></radialGradient>
<clipPath id="s2rim"><ellipse cx="248.2" cy="90" rx="84.3" ry="34"/></clipPath>
</defs><ellipse cx="248.2" cy="265.6" rx="42" ry="5.2" fill="url(#s2sh)"/><path d="M210.64 204.56A37.56 15.14 0 0 0 285.76 204.56L269.50 244.42A21.30 8.58 0 0 1 226.90 244.42Z" fill="url(#s2gw)"/><ellipse cx="248.2" cy="245.62" rx="19.80" ry="6.38" fill="#9d9d9d" opacity="0.33"/><path d="M210.64 204.56A37.56 15.14 0 0 0 285.76 204.56" fill="none" stroke="#ececec" stroke-width=".6" opacity=".3"/><path d="M195.16 166.63A53.04 21.37 0 0 0 301.24 166.63L285.76 204.56A37.56 15.14 0 0 1 210.64 204.56Z" fill="url(#s2gw)"/><ellipse cx="248.2" cy="205.76" rx="36.06" ry="12.94" fill="#9d9d9d" opacity="0.33"/><path d="M195.16 166.63A53.04 21.37 0 0 0 301.24 166.63" fill="none" stroke="#ececec" stroke-width=".6" opacity=".3"/><path d="M179.05 127.13A69.15 27.87 0 0 0 317.35 127.13L301.24 166.63A53.04 21.37 0 0 1 195.16 166.63Z" fill="url(#s2gw)"/><ellipse cx="248.2" cy="167.83" rx="51.54" ry="19.17" fill="#9d9d9d" opacity="0.33"/><path d="M179.05 127.13A69.15 27.87 0 0 0 317.35 127.13" fill="none" stroke="#ececec" stroke-width=".6" opacity=".3"/><path d="M163.90 90.00A84.30 33.97 0 0 0 332.50 90.00L317.35 127.13A69.15 27.87 0 0 1 179.05 127.13Z" fill="url(#s2bw)"/><ellipse cx="248.2" cy="90" rx="84.3" ry="34" fill="url(#s2bi)"/><path d="M242.2 56C246.2 86 278.2 112 310.2 118L338.2 90 308.2 50z" fill="#7db0ff" opacity=".16" clip-path="url(#s2rim)"/><ellipse cx="248.2" cy="128.13" rx="66.5" ry="27.6" fill="#3b5c9f" clip-path="url(#s2rim)"/><path d="M163.89999999999998 90A84.3 34 0 0 0 332.5 90" fill="none" stroke="#5c95ff" stroke-width=".6" opacity=".5"/><circle cx="320.4" cy="120.1" r="3.6" fill="#fff" stroke="#1560f2" stroke-width="3.4"/><circle cx="191.5" cy="158.6" r="3.6" fill="#fff" stroke="#1560f2" stroke-width="3.4"/><circle cx="288.9" cy="193.8" r="3.6" fill="#fff" stroke="#1560f2" stroke-width="3.4"/><circle cx="221.2" cy="231" r="3.6" fill="#fff" stroke="#1560f2" stroke-width="3.4"/><path d="M138.1 115.9l-5.2 4.5 5.2 4.6M145 115.9l5.2 4.5-5.2 4.6M143.4 114.4l-3.6 12.8" fill="none" stroke="#1560f2" stroke-width="1.55"/><rect x="349.35" y="89.85" width="14.9" height="9.9" rx=".5" fill="none" stroke="#1560f2" stroke-width="1.5"/><path d="M346.8 100.6h20.2v.6a1.5 1.5 0 0 1-1.5 1.5h-17.2a1.5 1.5 0 0 1-1.5-1.5z" fill="#1560f2"/><rect x="355.6" y="100.9" width="2.6" height=".7" fill="#cfe0ff"/><path d="M171.4 191.8a4.75 4.75 0 0 0-2.6 8.7v2.3h5.2v-2.3a4.75 4.75 0 0 0-2.6-8.7z" fill="#1560f2"/><path d="M169.1 204h4.6v.4a1.5 1.5 0 0 1-1.5 1.5h-1.6a1.5 1.5 0 0 1-1.5-1.5z" fill="#1560f2"/><path d="M169.6 195.6l1.8 2.4 1.8-2.4M171.4 198v4.6" fill="none" stroke="#fff" stroke-width=".9"/><path d="M171.4 187.3v2.8M164.9 190l1.9 1.9M177.9 190l-1.9 1.9M162.1 196.5h3.4M177.3 196.5h3.4" stroke="#1560f2" stroke-width="1.3" stroke-linecap="round"/><circle cx="323.4" cy="179.5" r="6.6" fill="none" stroke="#1560f2" stroke-width="2.2"/><circle cx="323.4" cy="179.5" r="3.3" fill="none" stroke="#1560f2" stroke-width="1.6"/><path d="M323.4 179.5l5.4-5.4" stroke="#1560f2" stroke-width="1.4"/><path d="M327.6 175.2l-.25-2.5 1.9-2.2.75 1.3 1.35-.25-.25 1.35 1.3.75-2.2 1.9z" fill="#1560f2" stroke="#1560f2" stroke-width=".5" stroke-linejoin="round"/></svg>
<div class="t" id="t107" style="top:126.80px;height:29px;line-height:29px;font-size:14.4px;color:#fff;font-weight:700;left:98.20px;width:300px;text-align:center;">A</div>
<div class="t" id="t108" style="top:158.80px;height:29px;line-height:29px;font-size:14.4px;color:#fff;font-weight:700;left:98.20px;width:300px;text-align:center;">B</div>
<div class="t" id="t109" style="top:191.00px;height:29px;line-height:29px;font-size:14.4px;color:#fff;font-weight:700;left:98.20px;width:300px;text-align:center;">C</div>
<div class="t" id="t110" style="top:222.70px;height:29px;line-height:29px;font-size:14.4px;color:#fff;font-weight:700;left:98.20px;width:300px;text-align:center;">D</div>
<div class="t" id="t111" style="top:8.70px;height:35px;line-height:35px;font-size:17.6px;color:#111;left:30px;transform:scaleX(.93);transform-origin:0 50%;">4 Level Semi Transparent Funnel Diagram</div>
<div class="t" id="t112" style="top:133.90px;height:21px;line-height:21px;font-size:10.4px;color:#444444;font-weight:700;right:345.00px;transform:scaleX(1.0090);transform-origin:100% 50%;">Sample Text</div>
<div class="t" id="t113" style="top:152.40px;height:17px;line-height:17px;font-size:8.3px;color:#858585;right:345.00px;">This is a sample text. Insert</div>
<div class="t" id="t114" style="top:162.40px;height:17px;line-height:17px;font-size:8.3px;color:#858585;right:345.00px;transform:scaleX(1.0053);transform-origin:100% 50%;">your desired text here.</div>
<div class="t" id="t115" style="top:211.70px;height:21px;line-height:21px;font-size:10.4px;color:#444444;font-weight:700;right:315.00px;transform:scaleX(1.0090);transform-origin:100% 50%;">Sample Text</div>
<div class="t" id="t116" style="top:230.20px;height:17px;line-height:17px;font-size:8.3px;color:#858585;right:315.00px;">This is a sample text. Insert</div>
<div class="t" id="t117" style="top:240.20px;height:17px;line-height:17px;font-size:8.3px;color:#858585;right:315.00px;transform:scaleX(1.0053);transform-origin:100% 50%;">your desired text here.</div>
<div class="t" id="t118" style="top:105.00px;height:21px;line-height:21px;font-size:10.4px;color:#444444;font-weight:700;left:345.3px;transform:scaleX(1.0090);transform-origin:0 50%;">Sample Text</div>
<div class="t" id="t119" style="top:123.50px;height:17px;line-height:17px;font-size:8.3px;color:#858585;left:345.3px;">This is a sample text. Insert</div>
<div class="t" id="t120" style="top:133.50px;height:17px;line-height:17px;font-size:8.3px;color:#858585;left:345.3px;transform:scaleX(1.0053);transform-origin:0 50%;">your desired text here.</div>
<div class="t" id="t121" style="top:191.90px;height:21px;line-height:21px;font-size:10.4px;color:#444444;font-weight:700;left:315px;transform:scaleX(1.0090);transform-origin:0 50%;">Sample Text</div>
<div class="t" id="t122" style="top:210.40px;height:17px;line-height:17px;font-size:8.3px;color:#858585;left:315px;">This is a sample text. Insert</div>
<div class="t" id="t123" style="top:220.40px;height:17px;line-height:17px;font-size:8.3px;color:#858585;left:315px;transform:scaleX(1.0053);transform-origin:0 50%;">your desired text here.</div></div></div>
<div class="t" id="t124" style="top:84.80px;height:16px;line-height:16px;font-size:8.2px;color:#d9582b;left:5.7px;">1</div>
<div class="a" style="left:17.5px;top:164.0px;width:117px;height:66.25px;background:#dcdcdc;"></div>
<div class="a th" style="left:18px;top:164.5px;width:116px;height:65.25px;overflow:hidden;background:#fff;"><div class="a" style="left:0;top:0;width:496px;height:279px;transform:scale(0.23387);transform-origin:0 0;"><svg style="left:0;top:0" width="496" height="279" viewBox="0 0 496 279"><defs>
<linearGradient id="s3gw" x1="0" x2="1" y1="0" y2="0"><stop offset="0" stop-color="#ececec"/><stop offset=".18" stop-color="#e2e2e2"/><stop offset=".5" stop-color="#cdcdcd"/><stop offset=".8" stop-color="#b9b9b9"/><stop offset=".93" stop-color="#bebebe"/><stop offset="1" stop-color="#d6d6d6"/></linearGradient>
<linearGradient id="s3bw" x1="0" x2="1" y1="0" y2="0"><stop offset="0" stop-color="#3a80f8"/><stop offset=".2" stop-color="#236df4"/><stop offset=".5" stop-color="#165fe8"/><stop offset=".74" stop-color="#2058d0"/><stop offset=".83" stop-color="#2a5ccc"/><stop offset=".87" stop-color="#3d7cee"/><stop offset="1" stop-color="#5e98f8"/></linearGradient>
<linearGradient id="s3bi" x1="0" x2="1" y1="0" y2="0"><stop offset="0" stop-color="#2361d8"/><stop offset=".45" stop-color="#2f70e8"/><stop offset="1" stop-color="#5b9afa"/></linearGradient>
<linearGradient id="s3gi" x1="0" x2="1" y1="0" y2="0"><stop offset="0" stop-color="#a9a9a9"/><stop offset=".5" stop-color="#c4c4c4"/><stop offset="1" stop-color="#dedede"/></linearGradient>
<radialGradient id="s3sh" cx=".5" cy=".5" r=".5"><stop offset="0" stop-color="#000" stop-opacity=".4"/><stop offset=".35" stop-color="#000" stop-opacity=".24"/><stop offset=".7" stop-color="#000" stop-opacity=".07"/><stop offset="1" stop-color="#000" stop-opacity="0"/></radialGradient>
<clipPath id="s3rim"><ellipse cx="248.2" cy="90" rx="84.3" ry="34"/></clipPath>
</defs><ellipse cx="248.2" cy="265.6" rx="42" ry="5.2" fill="url(#s3sh)"/><path d="M210.64 204.56A37.56 15.14 0 0 0 285.76 204.56L269.50 244.42A21.30 8.58 0 0 1 226.90 244.42Z" fill="url(#s3gw)"/><ellipse cx="248.2" cy="245.62" rx="19.80" ry="6.38" fill="#9d9d9d" opacity="0.33"/><path d="M210.64 204.56A37.56 15.14 0 0 0 285.76 204.56" fill="none" stroke="#ececec" stroke-width=".6" opacity=".3"/><path d="M195.16 166.63A53.04 21.37 0 0 0 301.24 166.63L285.76 204.56A37.56 15.14 0 0 1 210.64 204.56Z" fill="url(#s3gw)"/><ellipse cx="248.2" cy="205.76" rx="36.06" ry="12.94" fill="#9d9d9d" opacity="0.33"/><path d="M195.16 166.63A53.04 21.37 0 0 0 301.24 166.63" fill="none" stroke="#ececec" stroke-width=".6" opacity=".3"/><path d="M179.05 127.13A69.15 27.87 0 0 0 317.35 127.13L301.24 166.63A53.04 21.37 0 0 1 195.16 166.63Z" fill="url(#s3bw)"/><ellipse cx="248.2" cy="167.83" rx="51.54" ry="19.17" fill="#1449c4" opacity="0.5"/><path d="M179.05 127.13A69.15 27.87 0 0 0 317.35 127.13" fill="none" stroke="#6fa0ff" stroke-width=".6" opacity=".3"/><path d="M163.90 90.00A84.30 33.97 0 0 0 332.50 90.00L317.35 127.13A69.15 27.87 0 0 1 179.05 127.13Z" fill="url(#s3gw)"/><ellipse cx="248.2" cy="90" rx="84.3" ry="34" fill="url(#s3gi)"/><ellipse cx="248.2" cy="128.13" rx="66.5" ry="27.6" fill="#a6a6a6" clip-path="url(#s3rim)"/><path d="M163.89999999999998 90A84.3 34 0 0 0 332.5 90" fill="none" stroke="#e6e6e6" stroke-width=".6" opacity=".5"/><circle cx="320.4" cy="120.1" r="3.6" fill="#fff" stroke="#1560f2" stroke-width="3.4"/><circle cx="191.5" cy="158.6" r="3.6" fill="#fff" stroke="#1560f2" stroke-width="3.4"/><circle cx="288.9" cy="193.8" r="3.6" fill="#fff" stroke="#1560f2" stroke-width="3.4"/><circle cx="221.2" cy="231" r="3.6" fill="#fff" stroke="#1560f2" stroke-width="3.4"/><path d="M138.1 115.9l-5.2 4.5 5.2 4.6M145 115.9l5.2 4.5-5.2 4.6M143.4 114.4l-3.6 12.8" fill="none" stroke="#1560f2" stroke-width="1.55"/><rect x="349.35" y="89.85" width="14.9" height="9.9" rx=".5" fill="none" stroke="#1560f2" stroke-width="1.5"/><path d="M346.8 100.6h20.2v.6a1.5 1.5 0 0 1-1.5 1.5h-17.2a1.5 1.5 0 0 1-1.5-1.5z" fill="#1560f2"/><rect x="355.6" y="100.9" width="2.6" height=".7" fill="#cfe0ff"/><path d="M171.4 191.8a4.75 4.75 0 0 0-2.6 8.7v2.3h5.2v-2.3a4.75 4.75 0 0 0-2.6-8.7z" fill="#1560f2"/><path d="M169.1 204h4.6v.4a1.5 1.5 0 0 1-1.5 1.5h-1.6a1.5 1.5 0 0 1-1.5-1.5z" fill="#1560f2"/><path d="M169.6 195.6l1.8 2.4 1.8-2.4M171.4 198v4.6" fill="none" stroke="#fff" stroke-width=".9"/><path d="M171.4 187.3v2.8M164.9 190l1.9 1.9M177.9 190l-1.9 1.9M162.1 196.5h3.4M177.3 196.5h3.4" stroke="#1560f2" stroke-width="1.3" stroke-linecap="round"/><circle cx="323.4" cy="179.5" r="6.6" fill="none" stroke="#1560f2" stroke-width="2.2"/><circle cx="323.4" cy="179.5" r="3.3" fill="none" stroke="#1560f2" stroke-width="1.6"/><path d="M323.4 179.5l5.4-5.4" stroke="#1560f2" stroke-width="1.4"/><path d="M327.6 175.2l-.25-2.5 1.9-2.2.75 1.3 1.35-.25-.25 1.35 1.3.75-2.2 1.9z" fill="#1560f2" stroke="#1560f2" stroke-width=".5" stroke-linejoin="round"/></svg>
<div class="t" id="t125" style="top:126.80px;height:29px;line-height:29px;font-size:14.4px;color:#fff;font-weight:700;left:98.20px;width:300px;text-align:center;">A</div>
<div class="t" id="t126" style="top:158.80px;height:29px;line-height:29px;font-size:14.4px;color:#fff;font-weight:700;left:98.20px;width:300px;text-align:center;">B</div>
<div class="t" id="t127" style="top:191.00px;height:29px;line-height:29px;font-size:14.4px;color:#fff;font-weight:700;left:98.20px;width:300px;text-align:center;">C</div>
<div class="t" id="t128" style="top:222.70px;height:29px;line-height:29px;font-size:14.4px;color:#fff;font-weight:700;left:98.20px;width:300px;text-align:center;">D</div>
<div class="t" id="t129" style="top:8.70px;height:35px;line-height:35px;font-size:17.6px;color:#111;left:30px;transform:scaleX(.93);transform-origin:0 50%;">4 Level Semi Transparent Funnel Diagram</div>
<div class="t" id="t130" style="top:133.90px;height:21px;line-height:21px;font-size:10.4px;color:#444444;font-weight:700;right:345.00px;transform:scaleX(1.0090);transform-origin:100% 50%;">Sample Text</div>
<div class="t" id="t131" style="top:152.40px;height:17px;line-height:17px;font-size:8.3px;color:#858585;right:345.00px;">This is a sample text. Insert</div>
<div class="t" id="t132" style="top:162.40px;height:17px;line-height:17px;font-size:8.3px;color:#858585;right:345.00px;transform:scaleX(1.0053);transform-origin:100% 50%;">your desired text here.</div>
<div class="t" id="t133" style="top:211.70px;height:21px;line-height:21px;font-size:10.4px;color:#444444;font-weight:700;right:315.00px;transform:scaleX(1.0090);transform-origin:100% 50%;">Sample Text</div>
<div class="t" id="t134" style="top:230.20px;height:17px;line-height:17px;font-size:8.3px;color:#858585;right:315.00px;">This is a sample text. Insert</div>
<div class="t" id="t135" style="top:240.20px;height:17px;line-height:17px;font-size:8.3px;color:#858585;right:315.00px;transform:scaleX(1.0053);transform-origin:100% 50%;">your desired text here.</div>
<div class="t" id="t136" style="top:105.00px;height:21px;line-height:21px;font-size:10.4px;color:#444444;font-weight:700;left:345.3px;transform:scaleX(1.0090);transform-origin:0 50%;">Sample Text</div>
<div class="t" id="t137" style="top:123.50px;height:17px;line-height:17px;font-size:8.3px;color:#858585;left:345.3px;">This is a sample text. Insert</div>
<div class="t" id="t138" style="top:133.50px;height:17px;line-height:17px;font-size:8.3px;color:#858585;left:345.3px;transform:scaleX(1.0053);transform-origin:0 50%;">your desired text here.</div>
<div class="t" id="t139" style="top:191.90px;height:21px;line-height:21px;font-size:10.4px;color:#444444;font-weight:700;left:315px;transform:scaleX(1.0090);transform-origin:0 50%;">Sample Text</div>
<div class="t" id="t140" style="top:210.40px;height:17px;line-height:17px;font-size:8.3px;color:#858585;left:315px;">This is a sample text. Insert</div>
<div class="t" id="t141" style="top:220.40px;height:17px;line-height:17px;font-size:8.3px;color:#858585;left:315px;transform:scaleX(1.0053);transform-origin:0 50%;">your desired text here.</div></div></div>
<div class="t" id="t142" style="top:160.30px;height:16px;line-height:16px;font-size:8.2px;color:#6e6e6e;left:5.7px;">2</div>
<div class="a" style="left:17.5px;top:239.5px;width:117px;height:66.25px;background:#dcdcdc;"></div>
<div class="a th" style="left:18px;top:240px;width:116px;height:65.25px;overflow:hidden;background:#fff;"><div class="a" style="left:0;top:0;width:496px;height:279px;transform:scale(0.23387);transform-origin:0 0;"><svg style="left:0;top:0" width="496" height="279" viewBox="0 0 496 279"><defs>
<linearGradient id="s4gw" x1="0" x2="1" y1="0" y2="0"><stop offset="0" stop-color="#ececec"/><stop offset=".18" stop-color="#e2e2e2"/><stop offset=".5" stop-color="#cdcdcd"/><stop offset=".8" stop-color="#b9b9b9"/><stop offset=".93" stop-color="#bebebe"/><stop offset="1" stop-color="#d6d6d6"/></linearGradient>
<linearGradient id="s4bw" x1="0" x2="1" y1="0" y2="0"><stop offset="0" stop-color="#3a80f8"/><stop offset=".2" stop-color="#236df4"/><stop offset=".5" stop-color="#165fe8"/><stop offset=".74" stop-color="#2058d0"/><stop offset=".83" stop-color="#2a5ccc"/><stop offset=".87" stop-color="#3d7cee"/><stop offset="1" stop-color="#5e98f8"/></linearGradient>
<linearGradient id="s4bi" x1="0" x2="1" y1="0" y2="0"><stop offset="0" stop-color="#2361d8"/><stop offset=".45" stop-color="#2f70e8"/><stop offset="1" stop-color="#5b9afa"/></linearGradient>
<linearGradient id="s4gi" x1="0" x2="1" y1="0" y2="0"><stop offset="0" stop-color="#a9a9a9"/><stop offset=".5" stop-color="#c4c4c4"/><stop offset="1" stop-color="#dedede"/></linearGradient>
<radialGradient id="s4sh" cx=".5" cy=".5" r=".5"><stop offset="0" stop-color="#000" stop-opacity=".4"/><stop offset=".35" stop-color="#000" stop-opacity=".24"/><stop offset=".7" stop-color="#000" stop-opacity=".07"/><stop offset="1" stop-color="#000" stop-opacity="0"/></radialGradient>
<clipPath id="s4rim"><ellipse cx="248.2" cy="90" rx="84.3" ry="34"/></clipPath>
</defs><ellipse cx="248.2" cy="265.6" rx="42" ry="5.2" fill="url(#s4sh)"/><path d="M210.64 204.56A37.56 15.14 0 0 0 285.76 204.56L269.50 244.42A21.30 8.58 0 0 1 226.90 244.42Z" fill="url(#s4gw)"/><ellipse cx="248.2" cy="245.62" rx="19.80" ry="6.38" fill="#9d9d9d" opacity="0.33"/><path d="M210.64 204.56A37.56 15.14 0 0 0 285.76 204.56" fill="none" stroke="#ececec" stroke-width=".6" opacity=".3"/><path d="M195.16 166.63A53.04 21.37 0 0 0 301.24 166.63L285.76 204.56A37.56 15.14 0 0 1 210.64 204.56Z" fill="url(#s4bw)"/><ellipse cx="248.2" cy="205.76" rx="36.06" ry="12.94" fill="#1449c4" opacity="0.5"/><path d="M195.16 166.63A53.04 21.37 0 0 0 301.24 166.63" fill="none" stroke="#6fa0ff" stroke-width=".6" opacity=".3"/><path d="M179.05 127.13A69.15 27.87 0 0 0 317.35 127.13L301.24 166.63A53.04 21.37 0 0 1 195.16 166.63Z" fill="url(#s4gw)"/><ellipse cx="248.2" cy="167.83" rx="51.54" ry="19.17" fill="#9d9d9d" opacity="0.33"/><path d="M179.05 127.13A69.15 27.87 0 0 0 317.35 127.13" fill="none" stroke="#ececec" stroke-width=".6" opacity=".3"/><path d="M163.90 90.00A84.30 33.97 0 0 0 332.50 90.00L317.35 127.13A69.15 27.87 0 0 1 179.05 127.13Z" fill="url(#s4gw)"/><ellipse cx="248.2" cy="90" rx="84.3" ry="34" fill="url(#s4gi)"/><ellipse cx="248.2" cy="128.13" rx="66.5" ry="27.6" fill="#a6a6a6" clip-path="url(#s4rim)"/><path d="M163.89999999999998 90A84.3 34 0 0 0 332.5 90" fill="none" stroke="#e6e6e6" stroke-width=".6" opacity=".5"/><circle cx="320.4" cy="120.1" r="3.6" fill="#fff" stroke="#1560f2" stroke-width="3.4"/><circle cx="191.5" cy="158.6" r="3.6" fill="#fff" stroke="#1560f2" stroke-width="3.4"/><circle cx="288.9" cy="193.8" r="3.6" fill="#fff" stroke="#1560f2" stroke-width="3.4"/><circle cx="221.2" cy="231" r="3.6" fill="#fff" stroke="#1560f2" stroke-width="3.4"/><path d="M138.1 115.9l-5.2 4.5 5.2 4.6M145 115.9l5.2 4.5-5.2 4.6M143.4 114.4l-3.6 12.8" fill="none" stroke="#1560f2" stroke-width="1.55"/><rect x="349.35" y="89.85" width="14.9" height="9.9" rx=".5" fill="none" stroke="#1560f2" stroke-width="1.5"/><path d="M346.8 100.6h20.2v.6a1.5 1.5 0 0 1-1.5 1.5h-17.2a1.5 1.5 0 0 1-1.5-1.5z" fill="#1560f2"/><rect x="355.6" y="100.9" width="2.6" height=".7" fill="#cfe0ff"/><path d="M171.4 191.8a4.75 4.75 0 0 0-2.6 8.7v2.3h5.2v-2.3a4.75 4.75 0 0 0-2.6-8.7z" fill="#1560f2"/><path d="M169.1 204h4.6v.4a1.5 1.5 0 0 1-1.5 1.5h-1.6a1.5 1.5 0 0 1-1.5-1.5z" fill="#1560f2"/><path d="M169.6 195.6l1.8 2.4 1.8-2.4M171.4 198v4.6" fill="none" stroke="#fff" stroke-width=".9"/><path d="M171.4 187.3v2.8M164.9 190l1.9 1.9M177.9 190l-1.9 1.9M162.1 196.5h3.4M177.3 196.5h3.4" stroke="#1560f2" stroke-width="1.3" stroke-linecap="round"/><circle cx="323.4" cy="179.5" r="6.6" fill="none" stroke="#1560f2" stroke-width="2.2"/><circle cx="323.4" cy="179.5" r="3.3" fill="none" stroke="#1560f2" stroke-width="1.6"/><path d="M323.4 179.5l5.4-5.4" stroke="#1560f2" stroke-width="1.4"/><path d="M327.6 175.2l-.25-2.5 1.9-2.2.75 1.3 1.35-.25-.25 1.35 1.3.75-2.2 1.9z" fill="#1560f2" stroke="#1560f2" stroke-width=".5" stroke-linejoin="round"/></svg>
<div class="t" id="t143" style="top:126.80px;height:29px;line-height:29px;font-size:14.4px;color:#fff;font-weight:700;left:98.20px;width:300px;text-align:center;">A</div>
<div class="t" id="t144" style="top:158.80px;height:29px;line-height:29px;font-size:14.4px;color:#fff;font-weight:700;left:98.20px;width:300px;text-align:center;">B</div>
<div class="t" id="t145" style="top:191.00px;height:29px;line-height:29px;font-size:14.4px;color:#fff;font-weight:700;left:98.20px;width:300px;text-align:center;">C</div>
<div class="t" id="t146" style="top:222.70px;height:29px;line-height:29px;font-size:14.4px;color:#fff;font-weight:700;left:98.20px;width:300px;text-align:center;">D</div>
<div class="t" id="t147" style="top:8.70px;height:35px;line-height:35px;font-size:17.6px;color:#111;left:30px;transform:scaleX(.93);transform-origin:0 50%;">4 Level Semi Transparent Funnel Diagram</div>
<div class="t" id="t148" style="top:133.90px;height:21px;line-height:21px;font-size:10.4px;color:#444444;font-weight:700;right:345.00px;transform:scaleX(1.0090);transform-origin:100% 50%;">Sample Text</div>
<div class="t" id="t149" style="top:152.40px;height:17px;line-height:17px;font-size:8.3px;color:#858585;right:345.00px;">This is a sample text. Insert</div>
<div class="t" id="t150" style="top:162.40px;height:17px;line-height:17px;font-size:8.3px;color:#858585;right:345.00px;transform:scaleX(1.0053);transform-origin:100% 50%;">your desired text here.</div>
<div class="t" id="t151" style="top:211.70px;height:21px;line-height:21px;font-size:10.4px;color:#444444;font-weight:700;right:315.00px;transform:scaleX(1.0090);transform-origin:100% 50%;">Sample Text</div>
<div class="t" id="t152" style="top:230.20px;height:17px;line-height:17px;font-size:8.3px;color:#858585;right:315.00px;">This is a sample text. Insert</div>
<div class="t" id="t153" style="top:240.20px;height:17px;line-height:17px;font-size:8.3px;color:#858585;right:315.00px;transform:scaleX(1.0053);transform-origin:100% 50%;">your desired text here.</div>
<div class="t" id="t154" style="top:105.00px;height:21px;line-height:21px;font-size:10.4px;color:#444444;font-weight:700;left:345.3px;transform:scaleX(1.0090);transform-origin:0 50%;">Sample Text</div>
<div class="t" id="t155" style="top:123.50px;height:17px;line-height:17px;font-size:8.3px;color:#858585;left:345.3px;">This is a sample text. Insert</div>
<div class="t" id="t156" style="top:133.50px;height:17px;line-height:17px;font-size:8.3px;color:#858585;left:345.3px;transform:scaleX(1.0053);transform-origin:0 50%;">your desired text here.</div>
<div class="t" id="t157" style="top:191.90px;height:21px;line-height:21px;font-size:10.4px;color:#444444;font-weight:700;left:315px;transform:scaleX(1.0090);transform-origin:0 50%;">Sample Text</div>
<div class="t" id="t158" style="top:210.40px;height:17px;line-height:17px;font-size:8.3px;color:#858585;left:315px;">This is a sample text. Insert</div>
<div class="t" id="t159" style="top:220.40px;height:17px;line-height:17px;font-size:8.3px;color:#858585;left:315px;transform:scaleX(1.0053);transform-origin:0 50%;">your desired text here.</div></div></div>
<div class="t" id="t160" style="top:235.80px;height:16px;line-height:16px;font-size:8.2px;color:#6e6e6e;left:5.7px;">3</div>
<div class="a" style="left:17.5px;top:315.0px;width:117px;height:66.25px;background:#dcdcdc;"></div>
<div class="a th" style="left:18px;top:315.5px;width:116px;height:65.25px;overflow:hidden;background:#fff;"><div class="a" style="left:0;top:0;width:496px;height:279px;transform:scale(0.23387);transform-origin:0 0;"><svg style="left:0;top:0" width="496" height="279" viewBox="0 0 496 279"><defs>
<linearGradient id="s5gw" x1="0" x2="1" y1="0" y2="0"><stop offset="0" stop-color="#ececec"/><stop offset=".18" stop-color="#e2e2e2"/><stop offset=".5" stop-color="#cdcdcd"/><stop offset=".8" stop-color="#b9b9b9"/><stop offset=".93" stop-color="#bebebe"/><stop offset="1" stop-color="#d6d6d6"/></linearGradient>
<linearGradient id="s5bw" x1="0" x2="1" y1="0" y2="0"><stop offset="0" stop-color="#3a80f8"/><stop offset=".2" stop-color="#236df4"/><stop offset=".5" stop-color="#165fe8"/><stop offset=".74" stop-color="#2058d0"/><stop offset=".83" stop-color="#2a5ccc"/><stop offset=".87" stop-color="#3d7cee"/><stop offset="1" stop-color="#5e98f8"/></linearGradient>
<linearGradient id="s5bi" x1="0" x2="1" y1="0" y2="0"><stop offset="0" stop-color="#2361d8"/><stop offset=".45" stop-color="#2f70e8"/><stop offset="1" stop-color="#5b9afa"/></linearGradient>
<linearGradient id="s5gi" x1="0" x2="1" y1="0" y2="0"><stop offset="0" stop-color="#a9a9a9"/><stop offset=".5" stop-color="#c4c4c4"/><stop offset="1" stop-color="#dedede"/></linearGradient>
<radialGradient id="s5sh" cx=".5" cy=".5" r=".5"><stop offset="0" stop-color="#000" stop-opacity=".4"/><stop offset=".35" stop-color="#000" stop-opacity=".24"/><stop offset=".7" stop-color="#000" stop-opacity=".07"/><stop offset="1" stop-color="#000" stop-opacity="0"/></radialGradient>
<clipPath id="s5rim"><ellipse cx="248.2" cy="90" rx="84.3" ry="34"/></clipPath>
</defs><ellipse cx="248.2" cy="265.6" rx="42" ry="5.2" fill="url(#s5sh)"/><path d="M210.64 204.56A37.56 15.14 0 0 0 285.76 204.56L269.50 244.42A21.30 8.58 0 0 1 226.90 244.42Z" fill="url(#s5bw)"/><ellipse cx="248.2" cy="245.62" rx="19.80" ry="6.38" fill="#1449c4" opacity="0.5"/><path d="M210.64 204.56A37.56 15.14 0 0 0 285.76 204.56" fill="none" stroke="#6fa0ff" stroke-width=".6" opacity=".3"/><path d="M195.16 166.63A53.04 21.37 0 0 0 301.24 166.63L285.76 204.56A37.56 15.14 0 0 1 210.64 204.56Z" fill="url(#s5gw)"/><ellipse cx="248.2" cy="205.76" rx="36.06" ry="12.94" fill="#9d9d9d" opacity="0.33"/><path d="M195.16 166.63A53.04 21.37 0 0 0 301.24 166.63" fill="none" stroke="#ececec" stroke-width=".6" opacity=".3"/><path d="M179.05 127.13A69.15 27.87 0 0 0 317.35 127.13L301.24 166.63A53.04 21.37 0 0 1 195.16 166.63Z" fill="url(#s5gw)"/><ellipse cx="248.2" cy="167.83" rx="51.54" ry="19.17" fill="#9d9d9d" opacity="0.33"/><path d="M179.05 127.13A69.15 27.87 0 0 0 317.35 127.13" fill="none" stroke="#ececec" stroke-width=".6" opacity=".3"/><path d="M163.90 90.00A84.30 33.97 0 0 0 332.50 90.00L317.35 127.13A69.15 27.87 0 0 1 179.05 127.13Z" fill="url(#s5gw)"/><ellipse cx="248.2" cy="90" rx="84.3" ry="34" fill="url(#s5gi)"/><ellipse cx="248.2" cy="128.13" rx="66.5" ry="27.6" fill="#a6a6a6" clip-path="url(#s5rim)"/><path d="M163.89999999999998 90A84.3 34 0 0 0 332.5 90" fill="none" stroke="#e6e6e6" stroke-width=".6" opacity=".5"/><circle cx="320.4" cy="120.1" r="3.6" fill="#fff" stroke="#1560f2" stroke-width="3.4"/><circle cx="191.5" cy="158.6" r="3.6" fill="#fff" stroke="#1560f2" stroke-width="3.4"/><circle cx="288.9" cy="193.8" r="3.6" fill="#fff" stroke="#1560f2" stroke-width="3.4"/><circle cx="221.2" cy="231" r="3.6" fill="#fff" stroke="#1560f2" stroke-width="3.4"/><path d="M138.1 115.9l-5.2 4.5 5.2 4.6M145 115.9l5.2 4.5-5.2 4.6M143.4 114.4l-3.6 12.8" fill="none" stroke="#1560f2" stroke-width="1.55"/><rect x="349.35" y="89.85" width="14.9" height="9.9" rx=".5" fill="none" stroke="#1560f2" stroke-width="1.5"/><path d="M346.8 100.6h20.2v.6a1.5 1.5 0 0 1-1.5 1.5h-17.2a1.5 1.5 0 0 1-1.5-1.5z" fill="#1560f2"/><rect x="355.6" y="100.9" width="2.6" height=".7" fill="#cfe0ff"/><path d="M171.4 191.8a4.75 4.75 0 0 0-2.6 8.7v2.3h5.2v-2.3a4.75 4.75 0 0 0-2.6-8.7z" fill="#1560f2"/><path d="M169.1 204h4.6v.4a1.5 1.5 0 0 1-1.5 1.5h-1.6a1.5 1.5 0 0 1-1.5-1.5z" fill="#1560f2"/><path d="M169.6 195.6l1.8 2.4 1.8-2.4M171.4 198v4.6" fill="none" stroke="#fff" stroke-width=".9"/><path d="M171.4 187.3v2.8M164.9 190l1.9 1.9M177.9 190l-1.9 1.9M162.1 196.5h3.4M177.3 196.5h3.4" stroke="#1560f2" stroke-width="1.3" stroke-linecap="round"/><circle cx="323.4" cy="179.5" r="6.6" fill="none" stroke="#1560f2" stroke-width="2.2"/><circle cx="323.4" cy="179.5" r="3.3" fill="none" stroke="#1560f2" stroke-width="1.6"/><path d="M323.4 179.5l5.4-5.4" stroke="#1560f2" stroke-width="1.4"/><path d="M327.6 175.2l-.25-2.5 1.9-2.2.75 1.3 1.35-.25-.25 1.35 1.3.75-2.2 1.9z" fill="#1560f2" stroke="#1560f2" stroke-width=".5" stroke-linejoin="round"/></svg>
<div class="t" id="t161" style="top:126.80px;height:29px;line-height:29px;font-size:14.4px;color:#fff;font-weight:700;left:98.20px;width:300px;text-align:center;">A</div>
<div class="t" id="t162" style="top:158.80px;height:29px;line-height:29px;font-size:14.4px;color:#fff;font-weight:700;left:98.20px;width:300px;text-align:center;">B</div>
<div class="t" id="t163" style="top:191.00px;height:29px;line-height:29px;font-size:14.4px;color:#fff;font-weight:700;left:98.20px;width:300px;text-align:center;">C</div>
<div class="t" id="t164" style="top:222.70px;height:29px;line-height:29px;font-size:14.4px;color:#fff;font-weight:700;left:98.20px;width:300px;text-align:center;">D</div>
<div class="t" id="t165" style="top:8.70px;height:35px;line-height:35px;font-size:17.6px;color:#111;left:30px;transform:scaleX(.93);transform-origin:0 50%;">4 Level Semi Transparent Funnel Diagram</div>
<div class="t" id="t166" style="top:133.90px;height:21px;line-height:21px;font-size:10.4px;color:#444444;font-weight:700;right:345.00px;transform:scaleX(1.0090);transform-origin:100% 50%;">Sample Text</div>
<div class="t" id="t167" style="top:152.40px;height:17px;line-height:17px;font-size:8.3px;color:#858585;right:345.00px;">This is a sample text. Insert</div>
<div class="t" id="t168" style="top:162.40px;height:17px;line-height:17px;font-size:8.3px;color:#858585;right:345.00px;transform:scaleX(1.0053);transform-origin:100% 50%;">your desired text here.</div>
<div class="t" id="t169" style="top:211.70px;height:21px;line-height:21px;font-size:10.4px;color:#444444;font-weight:700;right:315.00px;transform:scaleX(1.0090);transform-origin:100% 50%;">Sample Text</div>
<div class="t" id="t170" style="top:230.20px;height:17px;line-height:17px;font-size:8.3px;color:#858585;right:315.00px;">This is a sample text. Insert</div>
<div class="t" id="t171" style="top:240.20px;height:17px;line-height:17px;font-size:8.3px;color:#858585;right:315.00px;transform:scaleX(1.0053);transform-origin:100% 50%;">your desired text here.</div>
<div class="t" id="t172" style="top:105.00px;height:21px;line-height:21px;font-size:10.4px;color:#444444;font-weight:700;left:345.3px;transform:scaleX(1.0090);transform-origin:0 50%;">Sample Text</div>
<div class="t" id="t173" style="top:123.50px;height:17px;line-height:17px;font-size:8.3px;color:#858585;left:345.3px;">This is a sample text. Insert</div>
<div class="t" id="t174" style="top:133.50px;height:17px;line-height:17px;font-size:8.3px;color:#858585;left:345.3px;transform:scaleX(1.0053);transform-origin:0 50%;">your desired text here.</div>
<div class="t" id="t175" style="top:191.90px;height:21px;line-height:21px;font-size:10.4px;color:#444444;font-weight:700;left:315px;transform:scaleX(1.0090);transform-origin:0 50%;">Sample Text</div>
<div class="t" id="t176" style="top:210.40px;height:17px;line-height:17px;font-size:8.3px;color:#858585;left:315px;">This is a sample text. Insert</div>
<div class="t" id="t177" style="top:220.40px;height:17px;line-height:17px;font-size:8.3px;color:#858585;left:315px;transform:scaleX(1.0053);transform-origin:0 50%;">your desired text here.</div></div></div>
<div class="t" id="t178" style="top:311.30px;height:16px;line-height:16px;font-size:8.2px;color:#6e6e6e;left:5.7px;">4</div>
<div class="a" style="left:17.5px;top:390.5px;width:117px;height:10.5px;background:#dcdcdc;"></div>
<div class="a th" style="left:18px;top:391px;width:116px;height:10px;overflow:hidden;background:#fff;"><div class="a" style="left:0;top:0;width:496px;height:279px;transform:scale(0.23387);transform-origin:0 0;"><svg style="left:0;top:0" width="496" height="279" viewBox="0 0 496 279"><defs>
<linearGradient id="s6gw" x1="0" x2="1" y1="0" y2="0"><stop offset="0" stop-color="#ececec"/><stop offset=".18" stop-color="#e2e2e2"/><stop offset=".5" stop-color="#cdcdcd"/><stop offset=".8" stop-color="#b9b9b9"/><stop offset=".93" stop-color="#bebebe"/><stop offset="1" stop-color="#d6d6d6"/></linearGradient>
<linearGradient id="s6bw" x1="0" x2="1" y1="0" y2="0"><stop offset="0" stop-color="#3a80f8"/><stop offset=".2" stop-color="#236df4"/><stop offset=".5" stop-color="#165fe8"/><stop offset=".74" stop-color="#2058d0"/><stop offset=".83" stop-color="#2a5ccc"/><stop offset=".87" stop-color="#3d7cee"/><stop offset="1" stop-color="#5e98f8"/></linearGradient>
<linearGradient id="s6bi" x1="0" x2="1" y1="0" y2="0"><stop offset="0" stop-color="#2361d8"/><stop offset=".45" stop-color="#2f70e8"/><stop offset="1" stop-color="#5b9afa"/></linearGradient>
<linearGradient id="s6gi" x1="0" x2="1" y1="0" y2="0"><stop offset="0" stop-color="#a9a9a9"/><stop offset=".5" stop-color="#c4c4c4"/><stop offset="1" stop-color="#dedede"/></linearGradient>
<radialGradient id="s6sh" cx=".5" cy=".5" r=".5"><stop offset="0" stop-color="#000" stop-opacity=".4"/><stop offset=".35" stop-color="#000" stop-opacity=".24"/><stop offset=".7" stop-color="#000" stop-opacity=".07"/><stop offset="1" stop-color="#000" stop-opacity="0"/></radialGradient>
<clipPath id="s6rim"><ellipse cx="248.2" cy="90" rx="84.3" ry="34"/></clipPath>
</defs><ellipse cx="248.2" cy="265.6" rx="42" ry="5.2" fill="url(#s6sh)"/><path d="M210.64 204.56A37.56 15.14 0 0 0 285.76 204.56L269.50 244.42A21.30 8.58 0 0 1 226.90 244.42Z" fill="url(#s6gw)"/><ellipse cx="248.2" cy="245.62" rx="19.80" ry="6.38" fill="#9d9d9d" opacity="0.33"/><path d="M210.64 204.56A37.56 15.14 0 0 0 285.76 204.56" fill="none" stroke="#ececec" stroke-width=".6" opacity=".3"/><path d="M195.16 166.63A53.04 21.37 0 0 0 301.24 166.63L285.76 204.56A37.56 15.14 0 0 1 210.64 204.56Z" fill="url(#s6gw)"/><ellipse cx="248.2" cy="205.76" rx="36.06" ry="12.94" fill="#9d9d9d" opacity="0.33"/><path d="M195.16 166.63A53.04 21.37 0 0 0 301.24 166.63" fill="none" stroke="#ececec" stroke-width=".6" opacity=".3"/><path d="M179.05 127.13A69.15 27.87 0 0 0 317.35 127.13L301.24 166.63A53.04 21.37 0 0 1 195.16 166.63Z" fill="url(#s6gw)"/><ellipse cx="248.2" cy="167.83" rx="51.54" ry="19.17" fill="#9d9d9d" opacity="0.33"/><path d="M179.05 127.13A69.15 27.87 0 0 0 317.35 127.13" fill="none" stroke="#ececec" stroke-width=".6" opacity=".3"/><path d="M163.90 90.00A84.30 33.97 0 0 0 332.50 90.00L317.35 127.13A69.15 27.87 0 0 1 179.05 127.13Z" fill="url(#s6bw)"/><ellipse cx="248.2" cy="90" rx="84.3" ry="34" fill="url(#s6bi)"/><path d="M242.2 56C246.2 86 278.2 112 310.2 118L338.2 90 308.2 50z" fill="#7db0ff" opacity=".16" clip-path="url(#s6rim)"/><ellipse cx="248.2" cy="128.13" rx="66.5" ry="27.6" fill="#3b5c9f" clip-path="url(#s6rim)"/><path d="M163.89999999999998 90A84.3 34 0 0 0 332.5 90" fill="none" stroke="#5c95ff" stroke-width=".6" opacity=".5"/><circle cx="320.4" cy="120.1" r="3.6" fill="#fff" stroke="#1560f2" stroke-width="3.4"/><circle cx="191.5" cy="158.6" r="3.6" fill="#fff" stroke="#1560f2" stroke-width="3.4"/><circle cx="288.9" cy="193.8" r="3.6" fill="#fff" stroke="#1560f2" stroke-width="3.4"/><circle cx="221.2" cy="231" r="3.6" fill="#fff" stroke="#1560f2" stroke-width="3.4"/><path d="M138.1 115.9l-5.2 4.5 5.2 4.6M145 115.9l5.2 4.5-5.2 4.6M143.4 114.4l-3.6 12.8" fill="none" stroke="#1560f2" stroke-width="1.55"/><rect x="349.35" y="89.85" width="14.9" height="9.9" rx=".5" fill="none" stroke="#1560f2" stroke-width="1.5"/><path d="M346.8 100.6h20.2v.6a1.5 1.5 0 0 1-1.5 1.5h-17.2a1.5 1.5 0 0 1-1.5-1.5z" fill="#1560f2"/><rect x="355.6" y="100.9" width="2.6" height=".7" fill="#cfe0ff"/><path d="M171.4 191.8a4.75 4.75 0 0 0-2.6 8.7v2.3h5.2v-2.3a4.75 4.75 0 0 0-2.6-8.7z" fill="#1560f2"/><path d="M169.1 204h4.6v.4a1.5 1.5 0 0 1-1.5 1.5h-1.6a1.5 1.5 0 0 1-1.5-1.5z" fill="#1560f2"/><path d="M169.6 195.6l1.8 2.4 1.8-2.4M171.4 198v4.6" fill="none" stroke="#fff" stroke-width=".9"/><path d="M171.4 187.3v2.8M164.9 190l1.9 1.9M177.9 190l-1.9 1.9M162.1 196.5h3.4M177.3 196.5h3.4" stroke="#1560f2" stroke-width="1.3" stroke-linecap="round"/><circle cx="323.4" cy="179.5" r="6.6" fill="none" stroke="#1560f2" stroke-width="2.2"/><circle cx="323.4" cy="179.5" r="3.3" fill="none" stroke="#1560f2" stroke-width="1.6"/><path d="M323.4 179.5l5.4-5.4" stroke="#1560f2" stroke-width="1.4"/><path d="M327.6 175.2l-.25-2.5 1.9-2.2.75 1.3 1.35-.25-.25 1.35 1.3.75-2.2 1.9z" fill="#1560f2" stroke="#1560f2" stroke-width=".5" stroke-linejoin="round"/></svg>
<div class="t" id="t179" style="top:126.80px;height:29px;line-height:29px;font-size:14.4px;color:#fff;font-weight:700;left:98.20px;width:300px;text-align:center;">A</div>
<div class="t" id="t180" style="top:158.80px;height:29px;line-height:29px;font-size:14.4px;color:#fff;font-weight:700;left:98.20px;width:300px;text-align:center;">B</div>
<div class="t" id="t181" style="top:191.00px;height:29px;line-height:29px;font-size:14.4px;color:#fff;font-weight:700;left:98.20px;width:300px;text-align:center;">C</div>
<div class="t" id="t182" style="top:222.70px;height:29px;line-height:29px;font-size:14.4px;color:#fff;font-weight:700;left:98.20px;width:300px;text-align:center;">D</div>
<div class="t" id="t183" style="top:8.70px;height:35px;line-height:35px;font-size:17.6px;color:#111;left:30px;transform:scaleX(.93);transform-origin:0 50%;">4 Level Semi Transparent Funnel Diagram</div>
<div class="t" id="t184" style="top:133.90px;height:21px;line-height:21px;font-size:10.4px;color:#444444;font-weight:700;right:345.00px;transform:scaleX(1.0090);transform-origin:100% 50%;">Sample Text</div>
<div class="t" id="t185" style="top:152.40px;height:17px;line-height:17px;font-size:8.3px;color:#858585;right:345.00px;">This is a sample text. Insert</div>
<div class="t" id="t186" style="top:162.40px;height:17px;line-height:17px;font-size:8.3px;color:#858585;right:345.00px;transform:scaleX(1.0053);transform-origin:100% 50%;">your desired text here.</div>
<div class="t" id="t187" style="top:211.70px;height:21px;line-height:21px;font-size:10.4px;color:#444444;font-weight:700;right:315.00px;transform:scaleX(1.0090);transform-origin:100% 50%;">Sample Text</div>
<div class="t" id="t188" style="top:230.20px;height:17px;line-height:17px;font-size:8.3px;color:#858585;right:315.00px;">This is a sample text. Insert</div>
<div class="t" id="t189" style="top:240.20px;height:17px;line-height:17px;font-size:8.3px;color:#858585;right:315.00px;transform:scaleX(1.0053);transform-origin:100% 50%;">your desired text here.</div>
<div class="t" id="t190" style="top:105.00px;height:21px;line-height:21px;font-size:10.4px;color:#444444;font-weight:700;left:345.3px;transform:scaleX(1.0090);transform-origin:0 50%;">Sample Text</div>
<div class="t" id="t191" style="top:123.50px;height:17px;line-height:17px;font-size:8.3px;color:#858585;left:345.3px;">This is a sample text. Insert</div>
<div class="t" id="t192" style="top:133.50px;height:17px;line-height:17px;font-size:8.3px;color:#858585;left:345.3px;transform:scaleX(1.0053);transform-origin:0 50%;">your desired text here.</div>
<div class="t" id="t193" style="top:191.90px;height:21px;line-height:21px;font-size:10.4px;color:#444444;font-weight:700;left:315px;transform:scaleX(1.0090);transform-origin:0 50%;">Sample Text</div>
<div class="t" id="t194" style="top:210.40px;height:17px;line-height:17px;font-size:8.3px;color:#858585;left:315px;">This is a sample text. Insert</div>
<div class="t" id="t195" style="top:220.40px;height:17px;line-height:17px;font-size:8.3px;color:#858585;left:315px;transform:scaleX(1.0053);transform-origin:0 50%;">your desired text here.</div></div></div>
<div class="t" id="t196" style="top:386.80px;height:16px;line-height:16px;font-size:8.2px;color:#6e6e6e;left:5.7px;">5</div>
</div>
</body></html>
